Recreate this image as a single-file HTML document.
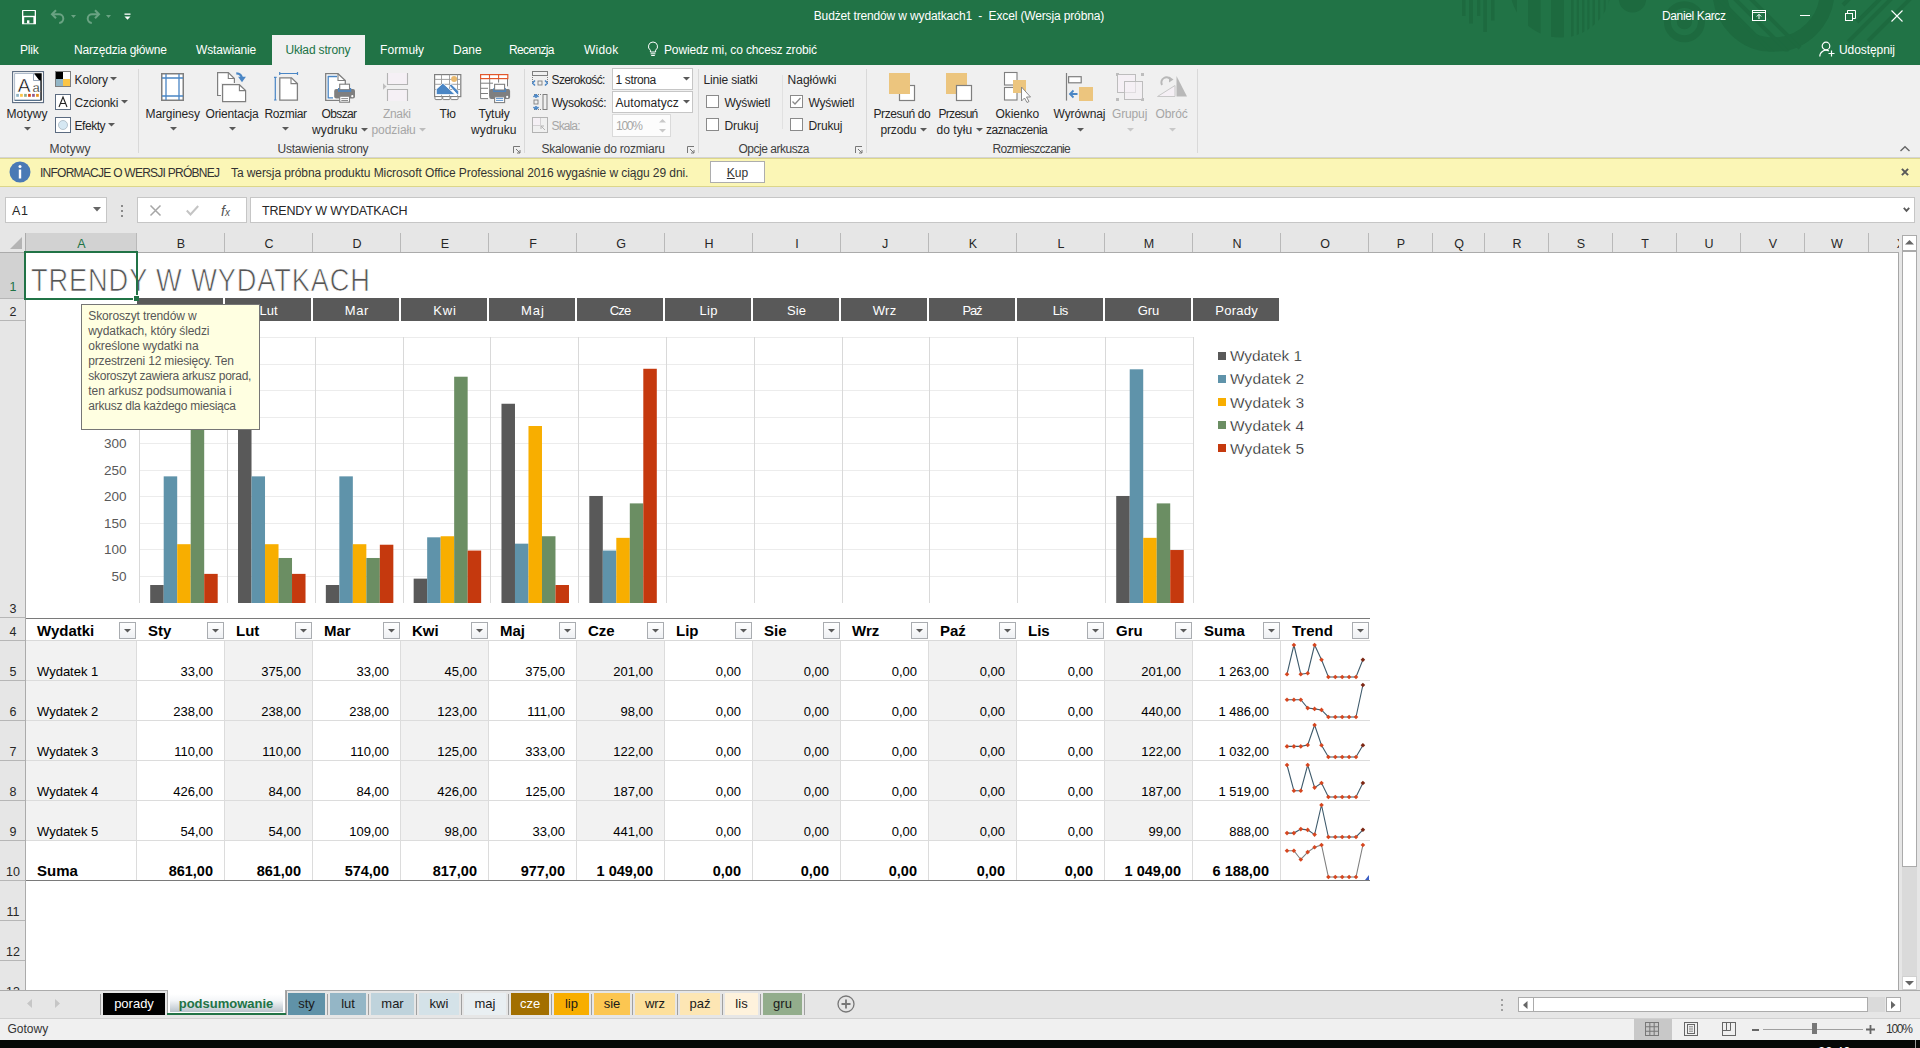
<!DOCTYPE html>
<html><head><meta charset="utf-8"><style>
html,body{margin:0;padding:0;width:1920px;height:1048px;overflow:hidden;background:#fff;font-family:"Liberation Sans", sans-serif;}
body>div,body>svg{position:absolute;}
svg{overflow:visible}

</style></head><body>
<div style="left:0px;top:0px;width:1920px;height:65px;background:#217346"></div>
<svg style="left:0px;top:0px;" width="1920" height="65" viewBox="0 0 1920 65"><defs><clipPath id="tb"><rect x="0" y="0" width="1920" height="65"/></clipPath>
<clipPath id="semi"><circle cx="1560.6" cy="-13" r="50.6"/></clipPath>
<clipPath id="bigc"><rect x="1700" y="-10" width="150" height="61.6"/></clipPath></defs>
<g clip-path="url(#tb)" fill="#1d6a3f">
<rect x="1462" y="0" width="3.5" height="16"/><rect x="1469" y="0" width="4" height="23.5"/>
<rect x="1477" y="0" width="3.3" height="16"/><rect x="1483.3" y="0" width="3.7" height="32"/>
<rect x="1491" y="0" width="3.5" height="20.5"/>
<g clip-path="url(#semi)"><rect x="1508" y="0" width="9" height="60"/><rect x="1528" y="0" width="12.6" height="60"/>
<rect x="1551" y="0" width="13" height="60"/><rect x="1571" y="0" width="2.6" height="60"/><rect x="1576.7" y="0" width="2.2" height="60"/>
<rect x="1582" y="0" width="2.4" height="60"/><rect x="1587.3" y="0" width="2.2" height="60"/><rect x="1592.5" y="0" width="2.4" height="60"/>
<rect x="1598" y="0" width="2.2" height="60"/><rect x="1603.7" y="0" width="2" height="60"/><rect x="1608.7" y="0" width="2" height="60"/></g>
<circle cx="1632.5" cy="-1" r="13.6"/>
<circle cx="1684.4" cy="21.7" r="17.05" fill="none" stroke="#1d6a3f" stroke-width="6.9"/>
<circle cx="1684.4" cy="21.7" r="7.6"/>
<g clip-path="url(#bigc)"><circle cx="1773.5" cy="-9" r="53.7" fill="none" stroke="#1d6a3f" stroke-width="14.6"/>
<g stroke="#1d6a3f" stroke-width="4"><line x1="1715" y1="-5" x2="1775" y2="55"/><line x1="1728" y1="-8" x2="1788" y2="52"/><line x1="1742" y1="-10" x2="1800" y2="48"/></g></g>
<g stroke="#1d6a3f" stroke-width="4"><line x1="1843" y1="5" x2="1853" y2="-5"/><line x1="1857" y1="22" x2="1884" y2="-5"/><line x1="1848" y1="42" x2="1895" y2="-5"/><line x1="1868" y1="41" x2="1914" y2="-5"/></g>
</g></svg>
<svg style="left:21px;top:9px;" width="16" height="16" viewBox="0 0 16 16"><rect x="1" y="1" width="14" height="14.3" rx="0.6" fill="#fff"/><rect x="2.3" y="2.0" width="11.4" height="4.8" fill="#217346"/><rect x="3.2" y="8.2" width="9.2" height="6.1" fill="#217346"/><rect x="6.0" y="11.3" width="2.4" height="3" fill="#fff"/></svg>
<svg style="left:50px;top:9px;" width="16" height="15" viewBox="0 0 16 15"><path d="M6 1.2L2 5.2L6 9.2" fill="none" stroke="#6aa383" stroke-width="2"/><path d="M2.6 5.2H8.6a4.4 4.4 0 0 1 0.6 8.8" fill="none" stroke="#6aa383" stroke-width="2"/></svg>
<svg style="left:71px;top:15px;" width="6" height="4" viewBox="0 0 6 4"><path d="M0 0h5l-2.5 3z" fill="#6aa383"/></svg>
<svg style="left:85px;top:9px;" width="16" height="15" viewBox="0 0 16 15"><path d="M10 1.2L14 5.2L10 9.2" fill="none" stroke="#6aa383" stroke-width="2"/><path d="M13.4 5.2H7.4a4.4 4.4 0 0 0 -0.6 8.8" fill="none" stroke="#6aa383" stroke-width="2"/></svg>
<svg style="left:106px;top:15px;" width="6" height="4" viewBox="0 0 6 4"><path d="M0 0h5l-2.5 3z" fill="#6aa383"/></svg>
<svg style="left:124px;top:13px;" width="8" height="8" viewBox="0 0 8 8"><rect x="0.5" y="0.5" width="6" height="1.3" fill="#fff"/><path d="M0.5 3.5h6l-3 3.2z" fill="#fff"/></svg>
<div style="left:558.93px;width:800px;text-align:center;top:6.84px;font-size:12px;line-height:19px;color:#fff;font-weight:normal;white-space:pre;letter-spacing:-0.143px;">Budżet trendów w wydatkach1  -  Excel (Wersja próbna)</div>
<div style="left:1662px;top:6.84px;font-size:12px;line-height:19px;color:#fff;font-weight:normal;white-space:pre;letter-spacing:-0.366px;">Daniel Karcz</div>
<svg style="left:1752px;top:10px;" width="14" height="12" viewBox="0 0 14 12"><rect x="0.5" y="0.5" width="13" height="10" fill="none" stroke="#fff"/><line x1="0.5" y1="2.5" x2="13.5" y2="2.5" stroke="#fff"/><path d="M7 9V4.5M4.8 6.5L7 4.3L9.2 6.5" fill="none" stroke="#fff"/></svg>
<div style="left:1800px;top:15px;width:10px;height:1px;background:#fff"></div>
<svg style="left:1845px;top:10px;" width="12" height="12" viewBox="0 0 12 12"><rect x="0.5" y="3.5" width="7" height="7" fill="none" stroke="#fff"/><path d="M2.5 3.5V0.5H10.5V8.5H7.5" fill="none" stroke="#fff"/></svg>
<svg style="left:1891px;top:10px;" width="12" height="12" viewBox="0 0 12 12"><path d="M0.5 0.5L11.5 11.5M11.5 0.5L0.5 11.5" stroke="#fff" stroke-width="1.1"/></svg>
<div style="left:272px;top:35px;width:93px;height:30px;background:#f0f0f0"></div>
<div style="left:20px;top:40.84px;font-size:12px;line-height:19px;color:#fff;font-weight:normal;white-space:pre;letter-spacing:-0.196px;">Plik</div>
<div style="left:74px;top:40.84px;font-size:12px;line-height:19px;color:#fff;font-weight:normal;white-space:pre;letter-spacing:-0.159px;">Narzędzia główne</div>
<div style="left:196px;top:40.84px;font-size:12px;line-height:19px;color:#fff;font-weight:normal;white-space:pre;letter-spacing:-0.123px;">Wstawianie</div>
<div style="left:380px;top:40.84px;font-size:12px;line-height:19px;color:#fff;font-weight:normal;white-space:pre;letter-spacing:0.110px;">Formuły</div>
<div style="left:453px;top:40.84px;font-size:12px;line-height:19px;color:#fff;font-weight:normal;white-space:pre;">Dane</div>
<div style="left:509px;top:40.84px;font-size:12px;line-height:19px;color:#fff;font-weight:normal;white-space:pre;letter-spacing:-0.647px;">Recenzja</div>
<div style="left:584px;top:40.84px;font-size:12px;line-height:19px;color:#fff;font-weight:normal;white-space:pre;letter-spacing:0.227px;">Widok</div>
<div style="left:285.5px;top:40.84px;font-size:12px;line-height:19px;color:#217346;font-weight:normal;white-space:pre;letter-spacing:-0.154px;">Układ strony</div>
<svg style="left:647px;top:41px;" width="12" height="16" viewBox="0 0 12 16"><path d="M6 1a4.5 4.5 0 0 0-2.6 8.2V11h5.2V9.2A4.5 4.5 0 0 0 6 1z" fill="none" stroke="#fff" stroke-width="1"/><line x1="3.6" y1="12.8" x2="8.4" y2="12.8" stroke="#fff"/><line x1="4.2" y1="14.5" x2="7.8" y2="14.5" stroke="#fff"/></svg>
<div style="left:664px;top:40.84px;font-size:12px;line-height:19px;color:#fff;font-weight:normal;white-space:pre;letter-spacing:-0.138px;">Powiedz mi, co chcesz zrobić</div>
<svg style="left:1819px;top:41px;" width="16" height="16" viewBox="0 0 16 16"><circle cx="7" cy="5" r="3.8" fill="none" stroke="#fff" stroke-width="1.2"/><path d="M0.8 15.5a6.2 6.2 0 0 1 9-5.6" fill="none" stroke="#fff" stroke-width="1.2"/><path d="M12.5 9.5v6M9.5 12.5h6" stroke="#fff" stroke-width="1.2"/></svg>
<div style="left:1839px;top:40.84px;font-size:12px;line-height:19px;color:#fff;font-weight:normal;white-space:pre;letter-spacing:-0.078px;">Udostępnij</div>
<div style="left:0px;top:65px;width:1920px;height:92px;background:#f0f0f0"></div>
<div style="left:0px;top:157px;width:1920px;height:1px;background:#d4d4d4"></div>
<div style="left:138px;top:69px;width:1px;height:84px;background:#d9d9d9"></div>
<div style="left:524px;top:69px;width:1px;height:84px;background:#d9d9d9"></div>
<div style="left:698px;top:69px;width:1px;height:84px;background:#d9d9d9"></div>
<div style="left:866px;top:69px;width:1px;height:84px;background:#d9d9d9"></div>
<div style="left:1197px;top:69px;width:1px;height:84px;background:#d9d9d9"></div>
<div style="left:782px;top:75px;width:1px;height:54px;background:#e1e1e1"></div>
<svg style="left:12px;top:71px;" width="32" height="32" viewBox="0 0 32 32"><rect x="0.6" y="0.6" width="30.9" height="31" fill="#fff" stroke="#5b6b80" stroke-width="1.1"/>
<path d="M2.6 2.5H21.6L28.6 9.4V29.3H2.6z" fill="#fff" stroke="#9aa9bd" stroke-width="0.8"/><path d="M2.6 29.3H28.6" stroke="#2f4e6e" stroke-width="0.9"/>
<path d="M22.1 2.2H29.7V29.6H28.5V9.6H27.3z" fill="#000"/><path d="M21.5 2.5V9.5H28" fill="none" stroke="#8a9bb0" stroke-width="0.9"/>
<text x="5.8" y="20.8" font-family="Liberation Sans" font-size="19" fill="#000" stroke="#fff" stroke-width="0.5">A</text><text x="20.5" y="20.9" font-family="Liberation Sans" font-size="13" fill="#000" stroke="#fff" stroke-width="0.3">a</text>
<rect x="4.2" y="22.9" width="2.7" height="2.9" fill="#8fb4c5"/><rect x="8.1" y="22.9" width="2.7" height="2.9" fill="#fbc546"/><rect x="12.1" y="22.9" width="2.7" height="2.9" fill="#8faa88"/>
<rect x="16.1" y="22.9" width="2.7" height="2.9" fill="#e2420f"/><rect x="20.1" y="22.9" width="2.7" height="2.9" fill="#8e5a8f"/><rect x="24.1" y="22.9" width="2.7" height="2.9" fill="#e6911c"/></svg>
<div style="left:6.5px;top:104.84px;font-size:12px;line-height:19px;color:#262626;font-weight:normal;white-space:pre;letter-spacing:0.066px;">Motywy</div>
<svg style="left:24px;top:127px;" width="7" height="4" viewBox="0 0 7 4"><path d="M0 0h7l-3.5 3.5z" fill="#595959"/></svg>
<svg style="left:55px;top:71px;" width="16" height="16" viewBox="0 0 16 16"><rect x="0.5" y="0.5" width="15" height="15" fill="#fff" stroke="#7f7f7f"/><rect x="1" y="1" width="7" height="7" fill="#000"/><rect x="1" y="8" width="7" height="7" fill="#93b6c6"/><rect x="8" y="8" width="7" height="7" fill="#fbc546"/></svg>
<div style="left:74.5px;top:70.84px;font-size:12px;line-height:19px;color:#262626;font-weight:normal;white-space:pre;letter-spacing:-0.123px;">Kolory</div>
<svg style="left:110px;top:77px;" width="7" height="4" viewBox="0 0 7 4"><path d="M0 0h7l-3.5 3.5z" fill="#595959"/></svg>
<svg style="left:55px;top:94px;" width="16" height="16" viewBox="0 0 16 16"><rect x="0.5" y="0.5" width="15" height="15" fill="#fff" stroke="#5b6b80"/><path d="M4 13L8 3L12 13M5.5 9.5h5" fill="none" stroke="#222" stroke-width="1.1"/></svg>
<div style="left:74.5px;top:93.84px;font-size:12px;line-height:19px;color:#262626;font-weight:normal;white-space:pre;letter-spacing:-0.221px;">Czcionki</div>
<svg style="left:121px;top:100px;" width="7" height="4" viewBox="0 0 7 4"><path d="M0 0h7l-3.5 3.5z" fill="#595959"/></svg>
<svg style="left:55px;top:117px;" width="16" height="16" viewBox="0 0 16 16"><rect x="0.5" y="0.5" width="15" height="15" fill="#fff" stroke="#5b6b80"/><circle cx="8" cy="8" r="4.5" fill="#d6e8f3" stroke="#aab8c2" stroke-width="0.8"/></svg>
<div style="left:74.5px;top:116.84px;font-size:12px;line-height:19px;color:#262626;font-weight:normal;white-space:pre;letter-spacing:-0.449px;">Efekty</div>
<svg style="left:108px;top:123px;" width="7" height="4" viewBox="0 0 7 4"><path d="M0 0h7l-3.5 3.5z" fill="#595959"/></svg>
<div style="left:49.5px;top:139.84px;font-size:12px;line-height:19px;color:#404040;font-weight:normal;white-space:pre;letter-spacing:0.066px;">Motywy</div>
<svg style="left:161px;top:73px;" width="23" height="28" viewBox="0 0 23 28"><rect x="0.75" y="0.75" width="21.5" height="26.5" fill="#fff" stroke="#7f7f7f" stroke-width="1.5"/><path d="M5 1V27M18 1V27M1 5H22M1 23H22" stroke="#4a86c5" stroke-width="1.3"/></svg>
<div style="left:145.5px;top:104.84px;font-size:12px;line-height:19px;color:#262626;font-weight:normal;white-space:pre;letter-spacing:-0.107px;">Marginesy</div>
<svg style="left:170px;top:127px;" width="7" height="4" viewBox="0 0 7 4"><path d="M0 0h7l-3.5 3.5z" fill="#595959"/></svg>
<svg style="left:217px;top:72px;" width="31" height="31" viewBox="0 0 31 31"><path d="M0.6 0.6H11.3L17.4 6.5V23.5H0.6z" fill="#fff" stroke="#7f7f7f" stroke-width="1.2"/><path d="M11.3 0.6V6.5H17.4" fill="none" stroke="#7f7f7f" stroke-width="1.1"/><path d="M5.6 12.7H22.4L28.6 18.6V29.6H5.6z" fill="#fff" stroke="#f0f0f0" stroke-width="3.2"/><path d="M5.6 12.7H22.4L28.6 18.6V29.6H5.6z" fill="#fff" stroke="#7f7f7f" stroke-width="1.2"/><path d="M22.4 12.7V18.6H28.6" fill="none" stroke="#7f7f7f" stroke-width="1.1"/><path d="M19.3 1.3C22.6 1.3 25 3.6 25 7.2" fill="none" stroke="#4a86c5" stroke-width="2.3"/><path d="M21.1 4.8H28.9L25 10.3z" fill="#4a86c5"/></svg>
<div style="left:205.5px;top:104.84px;font-size:12px;line-height:19px;color:#262626;font-weight:normal;white-space:pre;letter-spacing:-0.155px;">Orientacja</div>
<svg style="left:229px;top:127px;" width="7" height="4" viewBox="0 0 7 4"><path d="M0 0h7l-3.5 3.5z" fill="#595959"/></svg>
<svg style="left:274px;top:72px;" width="25" height="29" viewBox="0 0 25 29"><path d="M5.7 1.5H23.5M5.7 0v3M23.5 0v3" stroke="#4a86c5" stroke-width="1.2"/><path d="M1.3 5.4V28M0 5.4H2.6M0 28H2.6" stroke="#4a86c5" stroke-width="1.2"/><path d="M5.8 5.9H17.5L23.4 11.6V28.1H5.8z" fill="#fff" stroke="#7f7f7f" stroke-width="1.3"/><path d="M17 5.9V11.6H23.4" fill="none" stroke="#7f7f7f" stroke-width="1.1"/></svg>
<div style="left:264.5px;top:104.84px;font-size:12px;line-height:19px;color:#262626;font-weight:normal;white-space:pre;letter-spacing:-0.362px;">Rozmiar</div>
<svg style="left:282px;top:127px;" width="7" height="4" viewBox="0 0 7 4"><path d="M0 0h7l-3.5 3.5z" fill="#595959"/></svg>
<svg style="left:325px;top:73px;" width="31" height="31" viewBox="0 0 31 31"><path d="M0.7 0.7H13L20.3 7.5V27.3H0.7z" fill="#fff" stroke="#7f7f7f" stroke-width="1.3"/><path d="M13 0.7V7.5H20.3" fill="none" stroke="#7f7f7f" stroke-width="1.1"/><path d="M12 3.5H3.2V24.8H8" fill="none" stroke="#4a86c5" stroke-width="1.3"/><rect x="9.2" y="16" width="20.8" height="9.4" rx="2" fill="#7f7f7f"/><rect x="13" y="15" width="13.2" height="3.8" fill="#4a86c5"/><rect x="14.7" y="11.2" width="9.8" height="5.5" fill="#fff" stroke="#7f7f7f" stroke-width="1.1"/><circle cx="27.3" cy="23.2" r="1.1" fill="#fff"/><rect x="14.7" y="23.2" width="9.8" height="6" fill="#fff" stroke="#7f7f7f" stroke-width="1.1"/><path d="M16.3 25.6H23M16.3 27.5H23" stroke="#7f7f7f" stroke-width="0.9"/></svg>
<div style="left:321.5px;top:104.84px;font-size:12px;line-height:19px;color:#262626;font-weight:normal;white-space:pre;letter-spacing:-0.616px;">Obszar</div>
<div style="left:312px;top:120.84px;font-size:12px;line-height:19px;color:#262626;font-weight:normal;white-space:pre;letter-spacing:0.136px;">wydruku</div>
<svg style="left:361px;top:127.5px;" width="7" height="4" viewBox="0 0 7 4"><path d="M0 0h7l-3.5 3.5z" fill="#595959"/></svg>
<svg style="left:383px;top:73px;" width="26" height="28" viewBox="0 0 26 28"><path d="M4.5 0V11.5H24.5V0" fill="#f5f0f5" stroke="#b3b3b3" stroke-width="1.1"/><path d="M4.5 28V16.5H24.5V28" fill="#f5f0f5" stroke="#b3b3b3" stroke-width="1.1"/><path d="M0 10.2L3.5 13.5L0 16.8z" fill="#bdbdbd"/></svg>
<div style="left:383px;top:104.84px;font-size:12px;line-height:19px;color:#a6a6a6;font-weight:normal;white-space:pre;letter-spacing:-0.336px;">Znaki</div>
<div style="left:371.5px;top:120.84px;font-size:12px;line-height:19px;color:#a6a6a6;font-weight:normal;white-space:pre;letter-spacing:-0.058px;">podziału</div>
<svg style="left:418.5px;top:127.5px;" width="7" height="4" viewBox="0 0 7 4"><path d="M0 0h7l-3.5 3.5z" fill="#bdbdbd"/></svg>
<svg style="left:434px;top:74px;" width="28" height="27" viewBox="0 0 28 27"><rect x="0.6" y="0.6" width="26.2" height="22" fill="#fff" stroke="#7f7f7f" stroke-width="1.2"/><path d="M7.5 0.6V22.6M15.5 0.6V22.6M23.5 0.6V22.6M0.6 5.4H26.8M0.6 10.3H26.8M0.6 15.5H26.8" stroke="#999" stroke-width="0.9"/><path d="M2.3 20.6V15.2L8.9 9.2L21.2 20.6z" fill="#4a86c5" stroke="#fff" stroke-width="0.8"/><path d="M15.2 11.5L17.2 10L24.7 17.2V20.6H23.2z" fill="#4a86c5" stroke="#fff" stroke-width="0.8"/><circle cx="20.1" cy="4.9" r="3" fill="#e9b96e"/><path d="M1 23.2v1.6a0.8 0.8 0 0 0 0.8 0.8H7.2a0.8 0.8 0 0 0 0.8-0.8v-1.6M8.8 23.2v1.6a0.8 0.8 0 0 0 0.8 0.8h5.6a0.8 0.8 0 0 0 0.8-0.8v-1.6M16.8 23.2v1.6a0.8 0.8 0 0 0 0.8 0.8h5.6a0.8 0.8 0 0 0 0.8-0.8v-1.6" fill="#fff" stroke="#7f7f7f" stroke-width="1"/></svg>
<div style="left:439.5px;top:104.84px;font-size:12px;line-height:19px;color:#262626;font-weight:normal;white-space:pre;letter-spacing:-0.135px;">Tło</div>
<svg style="left:480px;top:74px;" width="31" height="30" viewBox="0 0 31 30"><rect x="0.6" y="4.6" width="26.9" height="20" fill="#fff"/><path d="M0.6 4.6V24.6H8M0.6 9.2H13M0.6 14.3H8M0.6 19.5H8M9.7 4.6V21.8M18.6 4.6V8.6M27.5 4.6V12.3" fill="none" stroke="#7f7f7f" stroke-width="1"/><rect x="0.6" y="0.6" width="27.2" height="4" fill="#fff" stroke="#e2572b" stroke-width="1.2"/><path d="M9.5 0.6V4.6M18.6 0.6V4.6" stroke="#e2572b" stroke-width="1.1"/><rect x="9.2" y="14.9" width="20.9" height="10" rx="2" fill="#7f7f7f"/><rect x="13.2" y="14.2" width="12.9" height="3.7" fill="#4a86c5"/><rect x="14.6" y="10.3" width="10" height="5.7" fill="#fff" stroke="#7f7f7f" stroke-width="1.1"/><circle cx="27.2" cy="22.9" r="1.1" fill="#fff"/><rect x="14.6" y="22.8" width="10" height="5.8" fill="#fff" stroke="#7f7f7f" stroke-width="1.1"/><path d="M16 24.4H23.2M16 26.4H23.2" stroke="#4a86c5" stroke-width="0.9"/></svg>
<div style="left:478.5px;top:104.84px;font-size:12px;line-height:19px;color:#262626;font-weight:normal;white-space:pre;letter-spacing:-0.029px;">Tytuły</div>
<div style="left:471px;top:120.84px;font-size:12px;line-height:19px;color:#262626;font-weight:normal;white-space:pre;letter-spacing:0.136px;">wydruku</div>
<svg style="left:513px;top:146px;" width="8" height="8" viewBox="0 0 8 8"><path d="M0.5 7V0.5H7" fill="none" stroke="#777"/><path d="M3 3L7 7M7 4v3H4" fill="none" stroke="#777"/></svg>
<div style="left:277.5px;top:139.84px;font-size:12px;line-height:19px;color:#404040;font-weight:normal;white-space:pre;letter-spacing:-0.225px;">Ustawienia strony</div>
<svg style="left:532px;top:71px;" width="17" height="17" viewBox="0 0 17 17"><rect x="0.5" y="0.5" width="15" height="4" fill="none" stroke="#7f7f7f"/><path d="M0.5 6v8M15.5 6v8" stroke="#7f7f7f" stroke-dasharray="1 1"/><rect x="6" y="10" width="4" height="4" fill="none" stroke="#7f7f7f" stroke-width="0.9"/><path d="M0.5 12L3 9.5M0.5 12L3 14.5M15.5 12L13 9.5M15.5 12L13 14.5" stroke="#4a86c5" stroke-width="1.6"/></svg>
<div style="left:551.5px;top:70.84px;font-size:12px;line-height:19px;color:#262626;font-weight:normal;white-space:pre;letter-spacing:-0.606px;">Szerokość:</div>
<div style="left:612px;top:68px;width:81px;height:22px;background:#fff;border:1px solid #c6c6c6;box-sizing:border-box"></div>
<div style="left:615.5px;top:70.84px;font-size:12px;line-height:19px;color:#262626;font-weight:normal;white-space:pre;letter-spacing:-0.366px;">1 strona</div>
<svg style="left:683px;top:77px;" width="7" height="4" viewBox="0 0 7 4"><path d="M0 0h7l-3.5 3.5z" fill="#595959"/></svg>
<svg style="left:532px;top:94px;" width="17" height="17" viewBox="0 0 17 17"><rect x="11" y="0.5" width="4" height="15" fill="none" stroke="#7f7f7f"/><path d="M2 0.5h8M2 15.5h8" stroke="#7f7f7f" stroke-dasharray="1 1"/><rect x="2" y="6" width="4" height="4" fill="none" stroke="#7f7f7f" stroke-width="0.9"/><path d="M4 0.5L1.5 3M4 0.5L6.5 3M4 15.5L1.5 13M4 15.5L6.5 13M4 1v3M4 12v3" stroke="#4a86c5" stroke-width="1.6"/></svg>
<div style="left:551.5px;top:93.84px;font-size:12px;line-height:19px;color:#262626;font-weight:normal;white-space:pre;letter-spacing:-0.363px;">Wysokość:</div>
<div style="left:612px;top:91px;width:81px;height:22px;background:#fff;border:1px solid #c6c6c6;box-sizing:border-box"></div>
<div style="left:615.5px;top:93.84px;font-size:12px;line-height:19px;color:#262626;font-weight:normal;white-space:pre;letter-spacing:0.068px;">Automatycz</div>
<svg style="left:683px;top:100px;" width="7" height="4" viewBox="0 0 7 4"><path d="M0 0h7l-3.5 3.5z" fill="#595959"/></svg>
<svg style="left:532px;top:117px;" width="16" height="16" viewBox="0 0 16 16"><rect x="0.5" y="0.5" width="8" height="8" fill="#f5f0f5" stroke="#b3b3b3" stroke-dasharray="1 1"/><rect x="0.5" y="0.5" width="15" height="15" fill="none" stroke="#b3b3b3"/><path d="M9 9L13 13M9 9v3M9 9h3" stroke="#b3b3b3"/></svg>
<div style="left:551.5px;top:116.84px;font-size:12px;line-height:19px;color:#a6a6a6;font-weight:normal;white-space:pre;letter-spacing:-0.870px;">Skala:</div>
<div style="left:612px;top:114px;width:59px;height:23px;background:#fcfcfc;border:1px solid #dadada;box-sizing:border-box"></div>
<div style="left:616px;top:116.84px;font-size:12px;line-height:19px;color:#a6a6a6;font-weight:normal;white-space:pre;letter-spacing:-1.297px;">100%</div>
<svg style="left:659px;top:119px;" width="7" height="14" viewBox="0 0 7 14"><path d="M0 3.5h7L3.5 0z" fill="#c8c8c8"/><path d="M0 10h7L3.5 13.5z" fill="#c8c8c8"/></svg>
<div style="left:541.5px;top:139.84px;font-size:12px;line-height:19px;color:#404040;font-weight:normal;white-space:pre;letter-spacing:-0.222px;">Skalowanie do rozmiaru</div>
<svg style="left:687px;top:146px;" width="8" height="8" viewBox="0 0 8 8"><path d="M0.5 7V0.5H7" fill="none" stroke="#777"/><path d="M3 3L7 7M7 4v3H4" fill="none" stroke="#777"/></svg>
<div style="left:703.5px;top:70.84px;font-size:12px;line-height:19px;color:#262626;font-weight:normal;white-space:pre;letter-spacing:-0.166px;">Linie siatki</div>
<svg style="left:706px;top:95px;" width="13" height="13" viewBox="0 0 13 13"><rect x="0.5" y="0.5" width="12" height="12" fill="#fff" stroke="#8a8a8a"/></svg>
<div style="left:724.5px;top:93.84px;font-size:12px;line-height:19px;color:#262626;font-weight:normal;white-space:pre;letter-spacing:-0.190px;">Wyświetl</div>
<svg style="left:706px;top:118px;" width="13" height="13" viewBox="0 0 13 13"><rect x="0.5" y="0.5" width="12" height="12" fill="#fff" stroke="#8a8a8a"/></svg>
<div style="left:724.5px;top:116.84px;font-size:12px;line-height:19px;color:#262626;font-weight:normal;white-space:pre;letter-spacing:-0.135px;">Drukuj</div>
<div style="left:787.5px;top:70.84px;font-size:12px;line-height:19px;color:#262626;font-weight:normal;white-space:pre;letter-spacing:0.030px;">Nagłówki</div>
<svg style="left:790px;top:95px;" width="13" height="13" viewBox="0 0 13 13"><rect x="0.5" y="0.5" width="12" height="12" fill="#fff" stroke="#8a8a8a"/><path d="M2.5 6.5L5 9L10.5 3" fill="none" stroke="#8a8a8a" stroke-width="1.3"/></svg>
<div style="left:808.5px;top:93.84px;font-size:12px;line-height:19px;color:#262626;font-weight:normal;white-space:pre;letter-spacing:-0.190px;">Wyświetl</div>
<svg style="left:790px;top:118px;" width="13" height="13" viewBox="0 0 13 13"><rect x="0.5" y="0.5" width="12" height="12" fill="#fff" stroke="#8a8a8a"/></svg>
<div style="left:808.5px;top:116.84px;font-size:12px;line-height:19px;color:#262626;font-weight:normal;white-space:pre;letter-spacing:-0.135px;">Drukuj</div>
<div style="left:738.5px;top:139.84px;font-size:12px;line-height:19px;color:#404040;font-weight:normal;white-space:pre;letter-spacing:-0.483px;">Opcje arkusza</div>
<svg style="left:855px;top:146px;" width="8" height="8" viewBox="0 0 8 8"><path d="M0.5 7V0.5H7" fill="none" stroke="#777"/><path d="M3 3L7 7M7 4v3H4" fill="none" stroke="#777"/></svg>
<svg style="left:889px;top:73px;" width="28" height="28" viewBox="0 0 28 28"><rect x="10.5" y="12.5" width="15" height="15" fill="#fff" stroke="#7f7f7f" stroke-width="1.2"/><rect x="0" y="0" width="21" height="21" fill="#ecc57e"/></svg>
<div style="left:873.5px;top:104.84px;font-size:12px;line-height:19px;color:#262626;font-weight:normal;white-space:pre;letter-spacing:-0.389px;">Przesuń do</div>
<div style="left:880.5px;top:120.84px;font-size:12px;line-height:19px;color:#262626;font-weight:normal;white-space:pre;letter-spacing:-0.159px;">przodu</div>
<svg style="left:920px;top:127.5px;" width="7" height="4" viewBox="0 0 7 4"><path d="M0 0h7l-3.5 3.5z" fill="#595959"/></svg>
<svg style="left:946px;top:73px;" width="28" height="28" viewBox="0 0 28 28"><rect x="0" y="0" width="21" height="21" fill="#ecc57e"/><rect x="10.5" y="12.5" width="15" height="15" fill="#fff" stroke="#7f7f7f" stroke-width="1.2"/></svg>
<div style="left:938.5px;top:104.84px;font-size:12px;line-height:19px;color:#262626;font-weight:normal;white-space:pre;letter-spacing:-0.704px;">Przesuń</div>
<div style="left:936.5px;top:120.84px;font-size:12px;line-height:19px;color:#262626;font-weight:normal;white-space:pre;letter-spacing:0.041px;">do tyłu</div>
<svg style="left:975.5px;top:127.5px;" width="7" height="4" viewBox="0 0 7 4"><path d="M0 0h7l-3.5 3.5z" fill="#595959"/></svg>
<svg style="left:1004px;top:72px;" width="26" height="30" viewBox="0 0 26 30"><rect x="0.5" y="0.5" width="12.5" height="12.5" fill="#fff" stroke="#7f7f7f" stroke-width="1.1"/><rect x="0.5" y="15.5" width="12.5" height="12.5" fill="#fff" stroke="#7f7f7f" stroke-width="1.1"/><rect x="9" y="8" width="13" height="13" fill="#ecc57e"/><path d="M17.5 15v14l3-3l2.5 4.5l2-1l-2.5-4.5h4z" fill="#fff" stroke="#7f7f7f" stroke-width="0.9"/></svg>
<div style="left:995.5px;top:104.84px;font-size:12px;line-height:19px;color:#262626;font-weight:normal;white-space:pre;letter-spacing:-0.070px;">Okienko</div>
<div style="left:986px;top:120.84px;font-size:12px;line-height:19px;color:#262626;font-weight:normal;white-space:pre;letter-spacing:-0.496px;">zaznaczenia</div>
<svg style="left:1065px;top:72px;" width="30" height="30" viewBox="0 0 30 30"><path d="M1.5 1V28.6" stroke="#7f7f7f" stroke-width="1.2"/><rect x="3.6" y="4.7" width="12.6" height="6.1" fill="#fff" stroke="#7f7f7f" stroke-width="1.2"/><rect x="14" y="15" width="14" height="14" fill="#ecc57e"/><path d="M12.5 22H5M8.5 18.5L5 22L8.5 25.5" fill="none" stroke="#4a86c5" stroke-width="1.8"/></svg>
<div style="left:1053.5px;top:104.84px;font-size:12px;line-height:19px;color:#262626;font-weight:normal;white-space:pre;letter-spacing:-0.082px;">Wyrównaj</div>
<svg style="left:1077px;top:127.5px;" width="7" height="4" viewBox="0 0 7 4"><path d="M0 0h7l-3.5 3.5z" fill="#595959"/></svg>
<svg style="left:1116px;top:73px;" width="28" height="28" viewBox="0 0 28 28"><rect x="0" y="0" width="3" height="3" fill="#bdbdbd"/><rect x="25" y="0" width="3" height="3" fill="#bdbdbd"/><rect x="0" y="25" width="3" height="3" fill="#bdbdbd"/><rect x="25" y="25" width="3" height="3" fill="#bdbdbd"/><rect x="1.5" y="1.5" width="18" height="18" fill="#f5f0f5" stroke="#bdbdbd" stroke-width="1"/><rect x="8.5" y="8.5" width="18" height="18" fill="#f5f0f5" fill-opacity="0.6" stroke="#bdbdbd" stroke-width="1"/></svg>
<div style="left:1112px;top:104.84px;font-size:12px;line-height:19px;color:#a6a6a6;font-weight:normal;white-space:pre;letter-spacing:-0.144px;">Grupuj</div>
<svg style="left:1127px;top:127.5px;" width="7" height="4" viewBox="0 0 7 4"><path d="M0 0h7l-3.5 3.5z" fill="#c8c8c8"/></svg>
<svg style="left:1157px;top:75px;" width="31" height="22" viewBox="0 0 31 22"><path d="M0.5 21.5L18 10.5V21.5z" fill="#f5f0f5" stroke="#c8c8c8"/><path d="M19.5 1L30 21.5H19.5z" fill="#b8b8b8"/><path d="M5 10a5 5 0 0 1 9-5" fill="none" stroke="#b8b8b8" stroke-width="2"/><path d="M12 1.5l4.5 3l-4.5 3z" fill="#b8b8b8"/></svg>
<div style="left:1155.5px;top:104.84px;font-size:12px;line-height:19px;color:#a6a6a6;font-weight:normal;white-space:pre;letter-spacing:-0.095px;">Obróć</div>
<svg style="left:1168.5px;top:127.5px;" width="7" height="4" viewBox="0 0 7 4"><path d="M0 0h7l-3.5 3.5z" fill="#c8c8c8"/></svg>
<div style="left:992.5px;top:139.84px;font-size:12px;line-height:19px;color:#404040;font-weight:normal;white-space:pre;letter-spacing:-0.701px;">Rozmieszczanie</div>
<svg style="left:1900px;top:146px;" width="10" height="6" viewBox="0 0 10 6"><path d="M0.5 5L5 0.8L9.5 5" fill="none" stroke="#666" stroke-width="1.4"/></svg>
<div style="left:0px;top:158px;width:1920px;height:29px;background:#fbf6b6"></div>
<div style="left:0px;top:158px;width:1920px;height:1px;background:#dcd68a"></div>
<div style="left:0px;top:186px;width:1920px;height:1px;background:#dcd68a"></div>
<svg style="left:9px;top:161px;" width="22" height="22" viewBox="0 0 22 22"><circle cx="11" cy="11" r="10.5" fill="#4a7ab5"/><circle cx="11" cy="5.6" r="1.5" fill="#fff"/><rect x="9.8" y="8.5" width="2.4" height="9" fill="#fff"/></svg>
<div style="left:40px;top:163.84px;font-size:12px;line-height:19px;color:#333;font-weight:normal;white-space:pre;letter-spacing:-0.744px;">INFORMACJE O WERSJI PRÓBNEJ</div>
<div style="left:231px;top:163.84px;font-size:12px;line-height:19px;color:#333;font-weight:normal;white-space:pre;letter-spacing:-0.079px;">Ta wersja próbna produktu Microsoft Office Professional 2016 wygaśnie w ciągu 29 dni.</div>
<div style="left:710px;top:161px;width:55px;height:22px;background:#fff;border:1px solid #adadad;box-sizing:border-box"></div>
<div style="left:337.50px;width:800px;text-align:center;top:163.84px;font-size:12px;line-height:19px;color:#333;font-weight:normal;white-space:pre;"><u>K</u>up</div>
<svg style="left:1901px;top:168px;" width="8" height="8" viewBox="0 0 8 8"><path d="M0.9 0.9L7.1 7.1M7.1 0.9L0.9 7.1" stroke="#595959" stroke-width="2"/></svg>
<div style="left:0px;top:187px;width:1920px;height:46px;background:#e6e6e6"></div>
<div style="left:5px;top:197px;width:102px;height:26px;background:#fff;border:1px solid #c6c6c6;box-sizing:border-box"></div>
<div style="left:12px;top:201.17px;font-size:12.5px;line-height:20px;color:#262626;font-weight:normal;white-space:pre;letter-spacing:0.710px;">A1</div>
<svg style="left:93px;top:207px;" width="8" height="5" viewBox="0 0 8 5"><path d="M0 0h8L4 4.5z" fill="#666"/></svg>
<div style="left:121px;top:205px;width:2px;height:2px;background:#8a8a8a"></div>
<div style="left:121px;top:210px;width:2px;height:2px;background:#8a8a8a"></div>
<div style="left:121px;top:215px;width:2px;height:2px;background:#8a8a8a"></div>
<div style="left:137px;top:197px;width:110px;height:26px;background:#fff;border:1px solid #c6c6c6;box-sizing:border-box"></div>
<svg style="left:150px;top:205px;" width="11" height="11" viewBox="0 0 11 11"><path d="M0.5 0.5L10.5 10.5M10.5 0.5L0.5 10.5" stroke="#a6a6a6" stroke-width="1.5"/></svg>
<svg style="left:186px;top:205px;" width="13" height="11" viewBox="0 0 13 11"><path d="M0.8 5.5L4.5 9.5L12.2 1" fill="none" stroke="#c4c4c4" stroke-width="2"/></svg>
<div style="left:221px;top:199.65px;font-size:14px;line-height:22px;color:#555;font-weight:normal;white-space:pre;font-family:"Liberation Serif";"><i>f</i><span style="font-size:10px"><i>x</i></span></div>
<div style="left:250px;top:197px;width:1665px;height:26px;background:#fff;border:1px solid #c6c6c6;box-sizing:border-box"></div>
<div style="left:262px;top:201.17px;font-size:12.5px;line-height:20px;color:#262626;font-weight:normal;white-space:pre;letter-spacing:-0.197px;">TRENDY W WYDATKACH</div>
<svg style="left:1903px;top:207px;" width="7" height="5" viewBox="0 0 7 5"><path d="M0.8 0.9L3.5 3.9L6.2 0.9" fill="none" stroke="#595959" stroke-width="1.8"/></svg>
<div style="left:0px;top:233px;width:1899px;height:20px;background:#e6e6e6"></div>
<div style="left:25px;top:233px;width:111px;height:19px;background:#d2d2d2"></div>
<div style="left:25px;top:233px;width:1px;height:19px;background:#ababab"></div>
<div style="left:136px;top:233px;width:1px;height:19px;background:#b9b9b9"></div>
<div style="left:224px;top:233px;width:1px;height:19px;background:#b9b9b9"></div>
<div style="left:312px;top:233px;width:1px;height:19px;background:#b9b9b9"></div>
<div style="left:400px;top:233px;width:1px;height:19px;background:#b9b9b9"></div>
<div style="left:488px;top:233px;width:1px;height:19px;background:#b9b9b9"></div>
<div style="left:576px;top:233px;width:1px;height:19px;background:#b9b9b9"></div>
<div style="left:664px;top:233px;width:1px;height:19px;background:#b9b9b9"></div>
<div style="left:752px;top:233px;width:1px;height:19px;background:#b9b9b9"></div>
<div style="left:840px;top:233px;width:1px;height:19px;background:#b9b9b9"></div>
<div style="left:928px;top:233px;width:1px;height:19px;background:#b9b9b9"></div>
<div style="left:1016px;top:233px;width:1px;height:19px;background:#b9b9b9"></div>
<div style="left:1104px;top:233px;width:1px;height:19px;background:#b9b9b9"></div>
<div style="left:1192px;top:233px;width:1px;height:19px;background:#b9b9b9"></div>
<div style="left:1280px;top:233px;width:1px;height:19px;background:#b9b9b9"></div>
<div style="left:1368px;top:233px;width:1px;height:19px;background:#b9b9b9"></div>
<div style="left:1432px;top:233px;width:1px;height:19px;background:#b9b9b9"></div>
<div style="left:1484px;top:233px;width:1px;height:19px;background:#b9b9b9"></div>
<div style="left:1548px;top:233px;width:1px;height:19px;background:#b9b9b9"></div>
<div style="left:1612px;top:233px;width:1px;height:19px;background:#b9b9b9"></div>
<div style="left:1676px;top:233px;width:1px;height:19px;background:#b9b9b9"></div>
<div style="left:1740px;top:233px;width:1px;height:19px;background:#b9b9b9"></div>
<div style="left:1804px;top:233px;width:1px;height:19px;background:#b9b9b9"></div>
<div style="left:1868px;top:233px;width:1px;height:19px;background:#b9b9b9"></div>
<div style="left:0px;top:252px;width:1899px;height:1px;background:#ababab"></div>
<div style="left:-318.50px;width:800px;text-align:center;top:234.17px;font-size:12.5px;line-height:20px;color:#217346;font-weight:normal;white-space:pre;">A</div>
<div style="left:-219.00px;width:800px;text-align:center;top:234.17px;font-size:12.5px;line-height:20px;color:#262626;font-weight:normal;white-space:pre;">B</div>
<div style="left:-131.00px;width:800px;text-align:center;top:234.17px;font-size:12.5px;line-height:20px;color:#262626;font-weight:normal;white-space:pre;">C</div>
<div style="left:-43.00px;width:800px;text-align:center;top:234.17px;font-size:12.5px;line-height:20px;color:#262626;font-weight:normal;white-space:pre;">D</div>
<div style="left:45.00px;width:800px;text-align:center;top:234.17px;font-size:12.5px;line-height:20px;color:#262626;font-weight:normal;white-space:pre;">E</div>
<div style="left:133.00px;width:800px;text-align:center;top:234.17px;font-size:12.5px;line-height:20px;color:#262626;font-weight:normal;white-space:pre;">F</div>
<div style="left:221.00px;width:800px;text-align:center;top:234.17px;font-size:12.5px;line-height:20px;color:#262626;font-weight:normal;white-space:pre;">G</div>
<div style="left:309.00px;width:800px;text-align:center;top:234.17px;font-size:12.5px;line-height:20px;color:#262626;font-weight:normal;white-space:pre;">H</div>
<div style="left:397.00px;width:800px;text-align:center;top:234.17px;font-size:12.5px;line-height:20px;color:#262626;font-weight:normal;white-space:pre;">I</div>
<div style="left:485.00px;width:800px;text-align:center;top:234.17px;font-size:12.5px;line-height:20px;color:#262626;font-weight:normal;white-space:pre;">J</div>
<div style="left:573.00px;width:800px;text-align:center;top:234.17px;font-size:12.5px;line-height:20px;color:#262626;font-weight:normal;white-space:pre;">K</div>
<div style="left:661.00px;width:800px;text-align:center;top:234.17px;font-size:12.5px;line-height:20px;color:#262626;font-weight:normal;white-space:pre;">L</div>
<div style="left:749.00px;width:800px;text-align:center;top:234.17px;font-size:12.5px;line-height:20px;color:#262626;font-weight:normal;white-space:pre;">M</div>
<div style="left:837.00px;width:800px;text-align:center;top:234.17px;font-size:12.5px;line-height:20px;color:#262626;font-weight:normal;white-space:pre;">N</div>
<div style="left:925.00px;width:800px;text-align:center;top:234.17px;font-size:12.5px;line-height:20px;color:#262626;font-weight:normal;white-space:pre;">O</div>
<div style="left:1001.00px;width:800px;text-align:center;top:234.17px;font-size:12.5px;line-height:20px;color:#262626;font-weight:normal;white-space:pre;">P</div>
<div style="left:1059.00px;width:800px;text-align:center;top:234.17px;font-size:12.5px;line-height:20px;color:#262626;font-weight:normal;white-space:pre;">Q</div>
<div style="left:1117.00px;width:800px;text-align:center;top:234.17px;font-size:12.5px;line-height:20px;color:#262626;font-weight:normal;white-space:pre;">R</div>
<div style="left:1181.00px;width:800px;text-align:center;top:234.17px;font-size:12.5px;line-height:20px;color:#262626;font-weight:normal;white-space:pre;">S</div>
<div style="left:1245.00px;width:800px;text-align:center;top:234.17px;font-size:12.5px;line-height:20px;color:#262626;font-weight:normal;white-space:pre;">T</div>
<div style="left:1309.00px;width:800px;text-align:center;top:234.17px;font-size:12.5px;line-height:20px;color:#262626;font-weight:normal;white-space:pre;">U</div>
<div style="left:1373.00px;width:800px;text-align:center;top:234.17px;font-size:12.5px;line-height:20px;color:#262626;font-weight:normal;white-space:pre;">V</div>
<div style="left:1437.00px;width:800px;text-align:center;top:234.17px;font-size:12.5px;line-height:20px;color:#262626;font-weight:normal;white-space:pre;">W</div>
<div style="left:1501.00px;width:800px;text-align:center;top:234.17px;font-size:12.5px;line-height:20px;color:#262626;font-weight:normal;white-space:pre;">X</div>
<svg style="left:10px;top:237px;" width="12" height="12" viewBox="0 0 12 12"><path d="M12 0V12H0z" fill="#b4b4b4"/></svg>
<div style="left:0px;top:253px;width:25px;height:737px;background:#e6e6e6"></div>
<div style="left:0px;top:253px;width:25px;height:45px;background:#d2d2d2"></div>
<div style="left:25px;top:253px;width:1px;height:737px;background:#ababab"></div>
<div style="left:0px;top:298px;width:25px;height:1px;background:#b6b6b6"></div>
<div style="left:-387.00px;width:800px;text-align:center;top:277.17px;font-size:12.5px;line-height:20px;color:#217346;font-weight:normal;white-space:pre;">1</div>
<div style="left:0px;top:320px;width:25px;height:1px;background:#b6b6b6"></div>
<div style="left:-387.00px;width:800px;text-align:center;top:302.17px;font-size:12.5px;line-height:20px;color:#262626;font-weight:normal;white-space:pre;">2</div>
<div style="left:0px;top:617px;width:25px;height:1px;background:#b6b6b6"></div>
<div style="left:-387.00px;width:800px;text-align:center;top:599.17px;font-size:12.5px;line-height:20px;color:#262626;font-weight:normal;white-space:pre;">3</div>
<div style="left:0px;top:640px;width:25px;height:1px;background:#b6b6b6"></div>
<div style="left:-387.00px;width:800px;text-align:center;top:622.17px;font-size:12.5px;line-height:20px;color:#262626;font-weight:normal;white-space:pre;">4</div>
<div style="left:0px;top:680px;width:25px;height:1px;background:#b6b6b6"></div>
<div style="left:-387.00px;width:800px;text-align:center;top:662.17px;font-size:12.5px;line-height:20px;color:#262626;font-weight:normal;white-space:pre;">5</div>
<div style="left:0px;top:720px;width:25px;height:1px;background:#b6b6b6"></div>
<div style="left:-387.00px;width:800px;text-align:center;top:702.17px;font-size:12.5px;line-height:20px;color:#262626;font-weight:normal;white-space:pre;">6</div>
<div style="left:0px;top:760px;width:25px;height:1px;background:#b6b6b6"></div>
<div style="left:-387.00px;width:800px;text-align:center;top:742.17px;font-size:12.5px;line-height:20px;color:#262626;font-weight:normal;white-space:pre;">7</div>
<div style="left:0px;top:800px;width:25px;height:1px;background:#b6b6b6"></div>
<div style="left:-387.00px;width:800px;text-align:center;top:782.17px;font-size:12.5px;line-height:20px;color:#262626;font-weight:normal;white-space:pre;">8</div>
<div style="left:0px;top:840px;width:25px;height:1px;background:#b6b6b6"></div>
<div style="left:-387.00px;width:800px;text-align:center;top:822.17px;font-size:12.5px;line-height:20px;color:#262626;font-weight:normal;white-space:pre;">9</div>
<div style="left:0px;top:880px;width:25px;height:1px;background:#b6b6b6"></div>
<div style="left:-387.00px;width:800px;text-align:center;top:862.17px;font-size:12.5px;line-height:20px;color:#262626;font-weight:normal;white-space:pre;">10</div>
<div style="left:0px;top:920px;width:25px;height:1px;background:#b6b6b6"></div>
<div style="left:-387.00px;width:800px;text-align:center;top:902.17px;font-size:12.5px;line-height:20px;color:#262626;font-weight:normal;white-space:pre;">11</div>
<div style="left:0px;top:960px;width:25px;height:1px;background:#b6b6b6"></div>
<div style="left:-387.00px;width:800px;text-align:center;top:942.17px;font-size:12.5px;line-height:20px;color:#262626;font-weight:normal;white-space:pre;">12</div>
<div style="left:-387.00px;width:800px;text-align:center;top:982.17px;font-size:12.5px;line-height:20px;color:#262626;font-weight:normal;white-space:pre;">13</div>
<div style="left:26px;top:253px;width:1873px;height:737px;background:#fff"></div>
<div style="left:1898px;top:253px;width:1px;height:737px;background:#a6a6a6"></div>
<div style="left:1899px;top:233px;width:21px;height:758px;background:#e6e6e6"></div>
<div style="left:1902px;top:235px;width:15px;height:16px;background:#fff;border:1px solid #ababab;box-sizing:border-box"></div>
<svg style="left:1905px;top:240px;" width="9" height="5" viewBox="0 0 9 5"><path d="M0 4.5h9L4.5 0z" fill="#666"/></svg>
<div style="left:1902px;top:251px;width:15px;height:616px;background:#fff;border:1px solid #ababab;box-sizing:border-box"></div>
<div style="left:1902px;top:867px;width:15px;height:109px;background:#dadada"></div>
<div style="left:1902px;top:976px;width:15px;height:14px;background:#fff;border:1px solid #d0d0d0;box-sizing:border-box"></div>
<svg style="left:1905px;top:981px;" width="9" height="5" viewBox="0 0 9 5"><path d="M0 0h9L4.5 4.5z" fill="#666"/></svg>
<div style="left:0px;top:990px;width:1920px;height:1px;background:#ababab"></div>
<div style="left:0px;top:991px;width:1920px;height:27px;background:#e6e6e6"></div>
<div style="left:0px;top:1018px;width:1920px;height:1px;background:#d0d0d0"></div>
<div style="left:0px;top:1019px;width:1920px;height:21px;background:#f0f0f0"></div>
<div style="left:0px;top:1040px;width:1920px;height:8px;background:#060806"></div>
<svg style="left:1818px;top:1044px;" width="60" height="6" viewBox="0 0 60 6"><text x="0" y="12" font-family="Liberation Sans" font-size="13" fill="#fff">23:40</text></svg>
<div style="left:1915px;top:1040px;width:1px;height:8px;background:#999"></div>
<svg style="left:27px;top:999px;" width="6" height="9" viewBox="0 0 6 9"><path d="M5 0V9L0 4.5z" fill="#c6c6c6"/></svg>
<svg style="left:55px;top:999px;" width="6" height="9" viewBox="0 0 6 9"><path d="M0 0V9L5 4.5z" fill="#c6c6c6"/></svg>
<div style="left:100px;top:994px;width:1px;height:21px;background:#a0a0a0"></div>
<div style="left:103px;top:993px;width:62px;height:22px;background:#000"></div>
<div style="left:-266.00px;width:800px;text-align:center;top:993.99px;font-size:13px;line-height:20px;color:#fff;font-weight:normal;white-space:pre;">porady</div>
<div style="left:168px;top:990px;width:117px;height:24px;background:#fff"></div>
<div style="left:167px;top:990px;width:1px;height:24px;background:#a8a8a8"></div>
<div style="left:285px;top:990px;width:1px;height:24px;background:#a8a8a8"></div>
<div style="left:170px;top:994px;width:113px;height:18px;background:linear-gradient(#fff 0%,#f4f6f8 35%,#b9c3cb 100%)"></div>
<div style="left:167px;top:1013px;width:119px;height:2px;background:#217346"></div>
<div style="left:-174.00px;width:800px;text-align:center;top:993.99px;font-size:13px;line-height:20px;color:#217346;font-weight:bold;white-space:pre;">podsumowanie</div>
<div style="left:288px;top:993px;width:37px;height:22px;background:#6092a8"></div>
<div style="left:-93.50px;width:800px;text-align:center;top:993.99px;font-size:13px;line-height:20px;color:#1a1a1a;font-weight:normal;white-space:pre;">sty</div>
<div style="left:327px;top:994px;width:1px;height:21px;background:#a0a0a0"></div>
<div style="left:330px;top:993px;width:36px;height:22px;background:#94b6c6"></div>
<div style="left:-52.00px;width:800px;text-align:center;top:993.99px;font-size:13px;line-height:20px;color:#1a1a1a;font-weight:normal;white-space:pre;">lut</div>
<div style="left:368px;top:994px;width:1px;height:21px;background:#a0a0a0"></div>
<div style="left:371px;top:993px;width:43px;height:22px;background:#bfd3dc"></div>
<div style="left:-7.50px;width:800px;text-align:center;top:993.99px;font-size:13px;line-height:20px;color:#1a1a1a;font-weight:normal;white-space:pre;">mar</div>
<div style="left:416px;top:994px;width:1px;height:21px;background:#a0a0a0"></div>
<div style="left:419px;top:993px;width:40px;height:22px;background:#d4e2e8"></div>
<div style="left:39.00px;width:800px;text-align:center;top:993.99px;font-size:13px;line-height:20px;color:#1a1a1a;font-weight:normal;white-space:pre;">kwi</div>
<div style="left:461px;top:994px;width:1px;height:21px;background:#a0a0a0"></div>
<div style="left:464px;top:993px;width:42px;height:22px;background:#e9eff2"></div>
<div style="left:85.00px;width:800px;text-align:center;top:993.99px;font-size:13px;line-height:20px;color:#1a1a1a;font-weight:normal;white-space:pre;">maj</div>
<div style="left:508px;top:994px;width:1px;height:21px;background:#a0a0a0"></div>
<div style="left:511px;top:993px;width:38px;height:22px;background:#a26f00"></div>
<div style="left:130.00px;width:800px;text-align:center;top:993.99px;font-size:13px;line-height:20px;color:#fff;font-weight:normal;white-space:pre;">cze</div>
<div style="left:551px;top:994px;width:1px;height:21px;background:#a0a0a0"></div>
<div style="left:554px;top:993px;width:35px;height:22px;background:#f8ae00"></div>
<div style="left:171.50px;width:800px;text-align:center;top:993.99px;font-size:13px;line-height:20px;color:#1a1a1a;font-weight:normal;white-space:pre;">lip</div>
<div style="left:591px;top:994px;width:1px;height:21px;background:#a0a0a0"></div>
<div style="left:594px;top:993px;width:36px;height:22px;background:#fcc651"></div>
<div style="left:212.00px;width:800px;text-align:center;top:993.99px;font-size:13px;line-height:20px;color:#1a1a1a;font-weight:normal;white-space:pre;">sie</div>
<div style="left:632px;top:994px;width:1px;height:21px;background:#a0a0a0"></div>
<div style="left:635px;top:993px;width:40px;height:22px;background:#fde09c"></div>
<div style="left:255.00px;width:800px;text-align:center;top:993.99px;font-size:13px;line-height:20px;color:#1a1a1a;font-weight:normal;white-space:pre;">wrz</div>
<div style="left:677px;top:994px;width:1px;height:21px;background:#a0a0a0"></div>
<div style="left:680px;top:993px;width:40px;height:22px;background:#fde6b4"></div>
<div style="left:300.00px;width:800px;text-align:center;top:993.99px;font-size:13px;line-height:20px;color:#1a1a1a;font-weight:normal;white-space:pre;">paź</div>
<div style="left:722px;top:994px;width:1px;height:21px;background:#a0a0a0"></div>
<div style="left:725px;top:993px;width:33px;height:22px;background:#fef2dc"></div>
<div style="left:341.50px;width:800px;text-align:center;top:993.99px;font-size:13px;line-height:20px;color:#1a1a1a;font-weight:normal;white-space:pre;">lis</div>
<div style="left:760px;top:994px;width:1px;height:21px;background:#a0a0a0"></div>
<div style="left:763px;top:993px;width:39px;height:22px;background:#93ad8c"></div>
<div style="left:382.50px;width:800px;text-align:center;top:993.99px;font-size:13px;line-height:20px;color:#1a1a1a;font-weight:normal;white-space:pre;">gru</div>
<div style="left:804px;top:994px;width:1px;height:21px;background:#a0a0a0"></div>
<div style="left:286px;top:991px;width:1px;height:24px;background:#a0a0a0"></div>
<svg style="left:836px;top:994px;" width="20" height="20" viewBox="0 0 20 20"><circle cx="10" cy="10" r="8" fill="none" stroke="#777" stroke-width="1.3"/><path d="M10 5.5v9M5.5 10h9" stroke="#777" stroke-width="1.8"/></svg>
<div style="left:1501px;top:999px;width:2px;height:2px;background:#a0a0a0"></div>
<div style="left:1501px;top:1004px;width:2px;height:2px;background:#a0a0a0"></div>
<div style="left:1501px;top:1009px;width:2px;height:2px;background:#a0a0a0"></div>
<div style="left:1518px;top:997px;width:16px;height:15px;background:#fff;border:1px solid #ababab;box-sizing:border-box"></div>
<svg style="left:1523px;top:1001px;" width="5" height="8" viewBox="0 0 5 8"><path d="M4.5 0V8L0 4z" fill="#666"/></svg>
<div style="left:1533px;top:997px;width:335px;height:15px;background:#fff;border:1px solid #ababab;box-sizing:border-box"></div>
<div style="left:1868px;top:997px;width:17px;height:15px;background:#dadada"></div>
<div style="left:1886px;top:997px;width:15px;height:15px;background:#fff;border:1px solid #ababab;box-sizing:border-box"></div>
<svg style="left:1891px;top:1001px;" width="5" height="8" viewBox="0 0 5 8"><path d="M0 0V8L4.5 4z" fill="#666"/></svg>
<div style="left:7.5px;top:1019.84px;font-size:12px;line-height:19px;color:#333;font-weight:normal;white-space:pre;">Gotowy</div>
<div style="left:1634px;top:1019px;width:38px;height:21px;background:#c8c8c8"></div>
<svg style="left:1645px;top:1022px;" width="14" height="14" viewBox="0 0 14 14"><path d="M0 0h14v14H0z" fill="#777"/><path d="M1 1h3.3v3.3H1zM5.35 1h3.3v3.3h-3.3zM9.7 1H13v3.3H9.7zM1 5.35h3.3v3.3H1zM5.35 5.35h3.3v3.3h-3.3zM9.7 5.35H13v3.3H9.7zM1 9.7h3.3V13H1zM5.35 9.7h3.3V13h-3.3zM9.7 9.7H13V13H9.7z" fill="#c8c8c8"/></svg>
<svg style="left:1684px;top:1022px;" width="14" height="14" viewBox="0 0 14 14"><rect x="0.5" y="0.5" width="13" height="13" fill="none" stroke="#666"/><rect x="3.5" y="2.5" width="7" height="9" fill="none" stroke="#666"/><path d="M5 4.8h4M5 7h4M5 9.2h4" stroke="#666" stroke-width="0.8"/></svg>
<svg style="left:1722px;top:1022px;" width="14" height="14" viewBox="0 0 14 14"><rect x="0.5" y="0.5" width="13" height="13" fill="none" stroke="#666"/><path d="M0.5 8.5H8.5V0.5M4.5 0.5V8.5" fill="none" stroke="#666"/></svg>
<div style="left:1752px;top:1029px;width:7px;height:2px;background:#666"></div>
<div style="left:1763px;top:1029px;width:100px;height:1px;background:#a0a0a0"></div>
<div style="left:1812px;top:1023px;width:5px;height:11px;background:#777"></div>
<svg style="left:1866px;top:1025px;" width="9" height="9" viewBox="0 0 9 9"><path d="M4.5 0v9M0 4.5h9" stroke="#666" stroke-width="1.8"/></svg>
<div style="left:1886px;top:1019.84px;font-size:12px;line-height:19px;color:#333;font-weight:normal;white-space:pre;letter-spacing:-1.297px;">100%</div>
<div style="left:31.3px;top:256.25px;font-size:31px;line-height:49px;color:#555;font-weight:normal;white-space:pre;transform:scaleX(0.878);transform-origin:0 0;letter-spacing:1px;-webkit-text-stroke:0.7px #fff;">TRENDY W WYDATKACH</div>
<div style="left:137px;top:298px;width:86px;height:23px;background:#595959"></div>
<div style="left:-219.20px;width:800px;text-align:center;top:300.99px;font-size:13px;line-height:20px;color:#fff;font-weight:normal;white-space:pre;letter-spacing:0.609px;">Sty</div>
<div style="left:225px;top:298px;width:86px;height:23px;background:#595959"></div>
<div style="left:-131.52px;width:800px;text-align:center;top:300.99px;font-size:13px;line-height:20px;color:#fff;font-weight:normal;white-space:pre;letter-spacing:-0.036px;">Lut</div>
<div style="left:313px;top:298px;width:86px;height:23px;background:#595959"></div>
<div style="left:-43.20px;width:800px;text-align:center;top:300.99px;font-size:13px;line-height:20px;color:#fff;font-weight:normal;white-space:pre;letter-spacing:0.605px;">Mar</div>
<div style="left:401px;top:298px;width:86px;height:23px;background:#595959"></div>
<div style="left:44.94px;width:800px;text-align:center;top:300.99px;font-size:13px;line-height:20px;color:#fff;font-weight:normal;white-space:pre;letter-spacing:0.876px;">Kwi</div>
<div style="left:489px;top:298px;width:86px;height:23px;background:#595959"></div>
<div style="left:133.01px;width:800px;text-align:center;top:300.99px;font-size:13px;line-height:20px;color:#fff;font-weight:normal;white-space:pre;letter-spacing:1.026px;">Maj</div>
<div style="left:577px;top:298px;width:86px;height:23px;background:#595959"></div>
<div style="left:220.15px;width:800px;text-align:center;top:300.99px;font-size:13px;line-height:20px;color:#fff;font-weight:normal;white-space:pre;letter-spacing:-0.709px;">Cze</div>
<div style="left:665px;top:298px;width:86px;height:23px;background:#595959"></div>
<div style="left:308.66px;width:800px;text-align:center;top:300.99px;font-size:13px;line-height:20px;color:#fff;font-weight:normal;white-space:pre;letter-spacing:0.326px;">Lip</div>
<div style="left:753px;top:298px;width:86px;height:23px;background:#595959"></div>
<div style="left:396.53px;width:800px;text-align:center;top:300.99px;font-size:13px;line-height:20px;color:#fff;font-weight:normal;white-space:pre;letter-spacing:0.055px;">Sie</div>
<div style="left:841px;top:298px;width:86px;height:23px;background:#595959"></div>
<div style="left:484.68px;width:800px;text-align:center;top:300.99px;font-size:13px;line-height:20px;color:#fff;font-weight:normal;white-space:pre;letter-spacing:0.368px;">Wrz</div>
<div style="left:929px;top:298px;width:86px;height:23px;background:#595959"></div>
<div style="left:571.90px;width:800px;text-align:center;top:300.99px;font-size:13px;line-height:20px;color:#fff;font-weight:normal;white-space:pre;letter-spacing:-1.201px;">Paź</div>
<div style="left:1017px;top:298px;width:86px;height:23px;background:#595959"></div>
<div style="left:660.27px;width:800px;text-align:center;top:300.99px;font-size:13px;line-height:20px;color:#fff;font-weight:normal;white-space:pre;letter-spacing:-0.459px;">Lis</div>
<div style="left:1105px;top:298px;width:86px;height:23px;background:#595959"></div>
<div style="left:748.43px;width:800px;text-align:center;top:300.99px;font-size:13px;line-height:20px;color:#fff;font-weight:normal;white-space:pre;letter-spacing:-0.136px;">Gru</div>
<div style="left:1193px;top:298px;width:86px;height:23px;background:#595959"></div>
<div style="left:836.62px;width:800px;text-align:center;top:300.99px;font-size:13px;line-height:20px;color:#fff;font-weight:normal;white-space:pre;letter-spacing:0.242px;">Porady</div>
<svg style="left:0px;top:0px;pointer-events:none" width="1920" height="1048" viewBox="0 0 1920 1048"><rect x="139.6" y="576" width="1053.84" height="1" fill="#ececec"/><rect x="139.6" y="549" width="1053.84" height="1" fill="#ececec"/><rect x="139.6" y="523" width="1053.84" height="1" fill="#ececec"/><rect x="139.6" y="496" width="1053.84" height="1" fill="#ececec"/><rect x="139.6" y="470" width="1053.84" height="1" fill="#ececec"/><rect x="139.6" y="443" width="1053.84" height="1" fill="#ececec"/><rect x="139.6" y="417" width="1053.84" height="1" fill="#ececec"/><rect x="139.6" y="390" width="1053.84" height="1" fill="#ececec"/><rect x="139.6" y="364" width="1053.84" height="1" fill="#ececec"/><rect x="139.6" y="337" width="1053.84" height="1" fill="#ececec"/><rect x="139" y="337" width="1" height="266" fill="#d9d9d9"/><rect x="227" y="337" width="1" height="266" fill="#d9d9d9"/><rect x="315" y="337" width="1" height="266" fill="#d9d9d9"/><rect x="403" y="337" width="1" height="266" fill="#d9d9d9"/><rect x="490" y="337" width="1" height="266" fill="#d9d9d9"/><rect x="578" y="337" width="1" height="266" fill="#d9d9d9"/><rect x="666" y="337" width="1" height="266" fill="#d9d9d9"/><rect x="754" y="337" width="1" height="266" fill="#d9d9d9"/><rect x="842" y="337" width="1" height="266" fill="#d9d9d9"/><rect x="929" y="337" width="1" height="266" fill="#d9d9d9"/><rect x="1017" y="337" width="1" height="266" fill="#d9d9d9"/><rect x="1105" y="337" width="1" height="266" fill="#d9d9d9"/><rect x="1193" y="337" width="1" height="266" fill="#d9d9d9"/><rect x="150.20" y="585.01" width="13.5" height="17.99" fill="#595959"/><rect x="163.70" y="476.36" width="13.5" height="126.64" fill="#5f93aa"/><rect x="177.20" y="544.20" width="13.5" height="58.80" fill="#f8ae00"/><rect x="190.70" y="376.72" width="13.5" height="226.28" fill="#6b8e63"/><rect x="204.20" y="573.88" width="13.5" height="29.12" fill="#c5390e"/><rect x="238.02" y="403.75" width="13.5" height="199.25" fill="#595959"/><rect x="251.52" y="476.36" width="13.5" height="126.64" fill="#5f93aa"/><rect x="265.02" y="544.20" width="13.5" height="58.80" fill="#f8ae00"/><rect x="278.52" y="557.98" width="13.5" height="45.02" fill="#6b8e63"/><rect x="292.02" y="573.88" width="13.5" height="29.12" fill="#c5390e"/><rect x="325.84" y="585.01" width="13.5" height="17.99" fill="#595959"/><rect x="339.34" y="476.36" width="13.5" height="126.64" fill="#5f93aa"/><rect x="352.84" y="544.20" width="13.5" height="58.80" fill="#f8ae00"/><rect x="366.34" y="557.98" width="13.5" height="45.02" fill="#6b8e63"/><rect x="379.84" y="544.73" width="13.5" height="58.27" fill="#c5390e"/><rect x="413.66" y="578.65" width="13.5" height="24.35" fill="#595959"/><rect x="427.16" y="537.31" width="13.5" height="65.69" fill="#5f93aa"/><rect x="440.66" y="536.25" width="13.5" height="66.75" fill="#f8ae00"/><rect x="454.16" y="376.72" width="13.5" height="226.28" fill="#6b8e63"/><rect x="467.66" y="550.56" width="13.5" height="52.44" fill="#c5390e"/><rect x="501.48" y="403.75" width="13.5" height="199.25" fill="#595959"/><rect x="514.98" y="543.67" width="13.5" height="59.33" fill="#5f93aa"/><rect x="528.48" y="426.01" width="13.5" height="176.99" fill="#f8ae00"/><rect x="541.98" y="536.25" width="13.5" height="66.75" fill="#6b8e63"/><rect x="555.48" y="585.01" width="13.5" height="17.99" fill="#c5390e"/><rect x="589.30" y="495.97" width="13.5" height="107.03" fill="#595959"/><rect x="602.80" y="550.56" width="13.5" height="52.44" fill="#5f93aa"/><rect x="616.30" y="537.84" width="13.5" height="65.16" fill="#f8ae00"/><rect x="629.80" y="503.39" width="13.5" height="99.61" fill="#6b8e63"/><rect x="643.30" y="368.77" width="13.5" height="234.23" fill="#c5390e"/><rect x="1116.22" y="495.97" width="13.5" height="107.03" fill="#595959"/><rect x="1129.72" y="369.30" width="13.5" height="233.70" fill="#5f93aa"/><rect x="1143.22" y="537.84" width="13.5" height="65.16" fill="#f8ae00"/><rect x="1156.72" y="503.39" width="13.5" height="99.61" fill="#6b8e63"/><rect x="1170.22" y="550.03" width="13.5" height="52.97" fill="#c5390e"/></svg>
<div style="left:-673.50px;width:800px;text-align:right;top:566.32px;font-size:13.5px;line-height:21px;color:#595959;font-weight:normal;white-space:pre;">50</div>
<div style="left:-673.50px;width:800px;text-align:right;top:539.32px;font-size:13.5px;line-height:21px;color:#595959;font-weight:normal;white-space:pre;">100</div>
<div style="left:-673.50px;width:800px;text-align:right;top:513.32px;font-size:13.5px;line-height:21px;color:#595959;font-weight:normal;white-space:pre;">150</div>
<div style="left:-673.50px;width:800px;text-align:right;top:486.32px;font-size:13.5px;line-height:21px;color:#595959;font-weight:normal;white-space:pre;">200</div>
<div style="left:-673.50px;width:800px;text-align:right;top:460.32px;font-size:13.5px;line-height:21px;color:#595959;font-weight:normal;white-space:pre;">250</div>
<div style="left:-673.50px;width:800px;text-align:right;top:433.32px;font-size:13.5px;line-height:21px;color:#595959;font-weight:normal;white-space:pre;">300</div>
<div style="left:-673.50px;width:800px;text-align:right;top:407.32px;font-size:13.5px;line-height:21px;color:#595959;font-weight:normal;white-space:pre;">350</div>
<div style="left:-673.50px;width:800px;text-align:right;top:380.32px;font-size:13.5px;line-height:21px;color:#595959;font-weight:normal;white-space:pre;">400</div>
<div style="left:-673.50px;width:800px;text-align:right;top:354.32px;font-size:13.5px;line-height:21px;color:#595959;font-weight:normal;white-space:pre;">450</div>
<div style="left:-673.50px;width:800px;text-align:right;top:327.32px;font-size:13.5px;line-height:21px;color:#595959;font-weight:normal;white-space:pre;">500</div>
<div style="left:1218px;top:352px;width:8px;height:8px;background:#595959"></div>
<div style="left:1230px;top:344.13px;font-size:15.5px;line-height:24px;color:#000;font-weight:normal;white-space:pre;-webkit-text-stroke:0.35px #fff;letter-spacing:-0.136px;">Wydatek 1</div>
<div style="left:1218px;top:375px;width:8px;height:8px;background:#5f93aa"></div>
<div style="left:1230px;top:367.33px;font-size:15.5px;line-height:24px;color:#000;font-weight:normal;white-space:pre;-webkit-text-stroke:0.35px #fff;letter-spacing:0.114px;">Wydatek 2</div>
<div style="left:1218px;top:398px;width:8px;height:8px;background:#f8ae00"></div>
<div style="left:1230px;top:390.53px;font-size:15.5px;line-height:24px;color:#000;font-weight:normal;white-space:pre;-webkit-text-stroke:0.35px #fff;letter-spacing:0.114px;">Wydatek 3</div>
<div style="left:1218px;top:421px;width:8px;height:8px;background:#6b8e63"></div>
<div style="left:1230px;top:413.73px;font-size:15.5px;line-height:24px;color:#000;font-weight:normal;white-space:pre;-webkit-text-stroke:0.35px #fff;letter-spacing:0.114px;">Wydatek 4</div>
<div style="left:1218px;top:444px;width:8px;height:8px;background:#c5390e"></div>
<div style="left:1230px;top:436.93px;font-size:15.5px;line-height:24px;color:#000;font-weight:normal;white-space:pre;-webkit-text-stroke:0.35px #fff;letter-spacing:0.114px;">Wydatek 5</div>
<div style="left:26px;top:618px;width:1344px;height:1px;background:#7a7a7a"></div>
<div style="left:37px;top:619.30px;font-size:15px;line-height:24px;color:#000;font-weight:bold;white-space:pre;">Wydatki</div>
<svg style="left:119px;top:622px;" width="17" height="17" viewBox="0 0 17 17"><defs><linearGradient id="fb" x1="0" y1="0" x2="0" y2="1"><stop offset="0" stop-color="#fff"/><stop offset="1" stop-color="#eef0f3"/></linearGradient></defs><rect x="0.5" y="0.5" width="16" height="16" fill="url(#fb)" stroke="#a9acb0"/><path d="M5 7h7L8.5 10.5z" fill="#595959"/></svg>
<div style="left:148px;top:619.30px;font-size:15px;line-height:24px;color:#000;font-weight:bold;white-space:pre;">Sty</div>
<svg style="left:207px;top:622px;" width="17" height="17" viewBox="0 0 17 17"><defs><linearGradient id="fb" x1="0" y1="0" x2="0" y2="1"><stop offset="0" stop-color="#fff"/><stop offset="1" stop-color="#eef0f3"/></linearGradient></defs><rect x="0.5" y="0.5" width="16" height="16" fill="url(#fb)" stroke="#a9acb0"/><path d="M5 7h7L8.5 10.5z" fill="#595959"/></svg>
<div style="left:236px;top:619.30px;font-size:15px;line-height:24px;color:#000;font-weight:bold;white-space:pre;">Lut</div>
<svg style="left:295px;top:622px;" width="17" height="17" viewBox="0 0 17 17"><defs><linearGradient id="fb" x1="0" y1="0" x2="0" y2="1"><stop offset="0" stop-color="#fff"/><stop offset="1" stop-color="#eef0f3"/></linearGradient></defs><rect x="0.5" y="0.5" width="16" height="16" fill="url(#fb)" stroke="#a9acb0"/><path d="M5 7h7L8.5 10.5z" fill="#595959"/></svg>
<div style="left:324px;top:619.30px;font-size:15px;line-height:24px;color:#000;font-weight:bold;white-space:pre;">Mar</div>
<svg style="left:383px;top:622px;" width="17" height="17" viewBox="0 0 17 17"><defs><linearGradient id="fb" x1="0" y1="0" x2="0" y2="1"><stop offset="0" stop-color="#fff"/><stop offset="1" stop-color="#eef0f3"/></linearGradient></defs><rect x="0.5" y="0.5" width="16" height="16" fill="url(#fb)" stroke="#a9acb0"/><path d="M5 7h7L8.5 10.5z" fill="#595959"/></svg>
<div style="left:412px;top:619.30px;font-size:15px;line-height:24px;color:#000;font-weight:bold;white-space:pre;">Kwi</div>
<svg style="left:471px;top:622px;" width="17" height="17" viewBox="0 0 17 17"><defs><linearGradient id="fb" x1="0" y1="0" x2="0" y2="1"><stop offset="0" stop-color="#fff"/><stop offset="1" stop-color="#eef0f3"/></linearGradient></defs><rect x="0.5" y="0.5" width="16" height="16" fill="url(#fb)" stroke="#a9acb0"/><path d="M5 7h7L8.5 10.5z" fill="#595959"/></svg>
<div style="left:500px;top:619.30px;font-size:15px;line-height:24px;color:#000;font-weight:bold;white-space:pre;">Maj</div>
<svg style="left:559px;top:622px;" width="17" height="17" viewBox="0 0 17 17"><defs><linearGradient id="fb" x1="0" y1="0" x2="0" y2="1"><stop offset="0" stop-color="#fff"/><stop offset="1" stop-color="#eef0f3"/></linearGradient></defs><rect x="0.5" y="0.5" width="16" height="16" fill="url(#fb)" stroke="#a9acb0"/><path d="M5 7h7L8.5 10.5z" fill="#595959"/></svg>
<div style="left:588px;top:619.30px;font-size:15px;line-height:24px;color:#000;font-weight:bold;white-space:pre;">Cze</div>
<svg style="left:647px;top:622px;" width="17" height="17" viewBox="0 0 17 17"><defs><linearGradient id="fb" x1="0" y1="0" x2="0" y2="1"><stop offset="0" stop-color="#fff"/><stop offset="1" stop-color="#eef0f3"/></linearGradient></defs><rect x="0.5" y="0.5" width="16" height="16" fill="url(#fb)" stroke="#a9acb0"/><path d="M5 7h7L8.5 10.5z" fill="#595959"/></svg>
<div style="left:676px;top:619.30px;font-size:15px;line-height:24px;color:#000;font-weight:bold;white-space:pre;">Lip</div>
<svg style="left:735px;top:622px;" width="17" height="17" viewBox="0 0 17 17"><defs><linearGradient id="fb" x1="0" y1="0" x2="0" y2="1"><stop offset="0" stop-color="#fff"/><stop offset="1" stop-color="#eef0f3"/></linearGradient></defs><rect x="0.5" y="0.5" width="16" height="16" fill="url(#fb)" stroke="#a9acb0"/><path d="M5 7h7L8.5 10.5z" fill="#595959"/></svg>
<div style="left:764px;top:619.30px;font-size:15px;line-height:24px;color:#000;font-weight:bold;white-space:pre;">Sie</div>
<svg style="left:823px;top:622px;" width="17" height="17" viewBox="0 0 17 17"><defs><linearGradient id="fb" x1="0" y1="0" x2="0" y2="1"><stop offset="0" stop-color="#fff"/><stop offset="1" stop-color="#eef0f3"/></linearGradient></defs><rect x="0.5" y="0.5" width="16" height="16" fill="url(#fb)" stroke="#a9acb0"/><path d="M5 7h7L8.5 10.5z" fill="#595959"/></svg>
<div style="left:852px;top:619.30px;font-size:15px;line-height:24px;color:#000;font-weight:bold;white-space:pre;">Wrz</div>
<svg style="left:911px;top:622px;" width="17" height="17" viewBox="0 0 17 17"><defs><linearGradient id="fb" x1="0" y1="0" x2="0" y2="1"><stop offset="0" stop-color="#fff"/><stop offset="1" stop-color="#eef0f3"/></linearGradient></defs><rect x="0.5" y="0.5" width="16" height="16" fill="url(#fb)" stroke="#a9acb0"/><path d="M5 7h7L8.5 10.5z" fill="#595959"/></svg>
<div style="left:940px;top:619.30px;font-size:15px;line-height:24px;color:#000;font-weight:bold;white-space:pre;">Paź</div>
<svg style="left:999px;top:622px;" width="17" height="17" viewBox="0 0 17 17"><defs><linearGradient id="fb" x1="0" y1="0" x2="0" y2="1"><stop offset="0" stop-color="#fff"/><stop offset="1" stop-color="#eef0f3"/></linearGradient></defs><rect x="0.5" y="0.5" width="16" height="16" fill="url(#fb)" stroke="#a9acb0"/><path d="M5 7h7L8.5 10.5z" fill="#595959"/></svg>
<div style="left:1028px;top:619.30px;font-size:15px;line-height:24px;color:#000;font-weight:bold;white-space:pre;">Lis</div>
<svg style="left:1087px;top:622px;" width="17" height="17" viewBox="0 0 17 17"><defs><linearGradient id="fb" x1="0" y1="0" x2="0" y2="1"><stop offset="0" stop-color="#fff"/><stop offset="1" stop-color="#eef0f3"/></linearGradient></defs><rect x="0.5" y="0.5" width="16" height="16" fill="url(#fb)" stroke="#a9acb0"/><path d="M5 7h7L8.5 10.5z" fill="#595959"/></svg>
<div style="left:1116px;top:619.30px;font-size:15px;line-height:24px;color:#000;font-weight:bold;white-space:pre;">Gru</div>
<svg style="left:1175px;top:622px;" width="17" height="17" viewBox="0 0 17 17"><defs><linearGradient id="fb" x1="0" y1="0" x2="0" y2="1"><stop offset="0" stop-color="#fff"/><stop offset="1" stop-color="#eef0f3"/></linearGradient></defs><rect x="0.5" y="0.5" width="16" height="16" fill="url(#fb)" stroke="#a9acb0"/><path d="M5 7h7L8.5 10.5z" fill="#595959"/></svg>
<div style="left:1204px;top:619.30px;font-size:15px;line-height:24px;color:#000;font-weight:bold;white-space:pre;">Suma</div>
<svg style="left:1263px;top:622px;" width="17" height="17" viewBox="0 0 17 17"><defs><linearGradient id="fb" x1="0" y1="0" x2="0" y2="1"><stop offset="0" stop-color="#fff"/><stop offset="1" stop-color="#eef0f3"/></linearGradient></defs><rect x="0.5" y="0.5" width="16" height="16" fill="url(#fb)" stroke="#a9acb0"/><path d="M5 7h7L8.5 10.5z" fill="#595959"/></svg>
<div style="left:1292px;top:619.30px;font-size:15px;line-height:24px;color:#000;font-weight:bold;white-space:pre;">Trend</div>
<svg style="left:1352px;top:622px;" width="17" height="17" viewBox="0 0 17 17"><defs><linearGradient id="fb" x1="0" y1="0" x2="0" y2="1"><stop offset="0" stop-color="#fff"/><stop offset="1" stop-color="#eef0f3"/></linearGradient></defs><rect x="0.5" y="0.5" width="16" height="16" fill="url(#fb)" stroke="#a9acb0"/><path d="M5 7h7L8.5 10.5z" fill="#595959"/></svg>
<div style="left:26px;top:640px;width:1344px;height:1px;background:#d9d9d9"></div>
<div style="left:26px;top:641px;width:110px;height:39px;background:#f2f2f2"></div>
<div style="left:225px;top:641px;width:87px;height:39px;background:#f2f2f2"></div>
<div style="left:401px;top:641px;width:87px;height:39px;background:#f2f2f2"></div>
<div style="left:577px;top:641px;width:87px;height:39px;background:#f2f2f2"></div>
<div style="left:753px;top:641px;width:87px;height:39px;background:#f2f2f2"></div>
<div style="left:929px;top:641px;width:87px;height:39px;background:#f2f2f2"></div>
<div style="left:1105px;top:641px;width:87px;height:39px;background:#f2f2f2"></div>
<div style="left:26px;top:680px;width:1344px;height:1px;background:#dcdcdc"></div>
<div style="left:37px;top:661.99px;font-size:13px;line-height:20px;color:#000;font-weight:normal;white-space:pre;">Wydatek 1</div>
<div style="left:-587.00px;width:800px;text-align:right;top:661.99px;font-size:13px;line-height:20px;color:#000;font-weight:normal;white-space:pre;">33,00</div>
<div style="left:-499.00px;width:800px;text-align:right;top:661.99px;font-size:13px;line-height:20px;color:#000;font-weight:normal;white-space:pre;">375,00</div>
<div style="left:-411.00px;width:800px;text-align:right;top:661.99px;font-size:13px;line-height:20px;color:#000;font-weight:normal;white-space:pre;">33,00</div>
<div style="left:-323.00px;width:800px;text-align:right;top:661.99px;font-size:13px;line-height:20px;color:#000;font-weight:normal;white-space:pre;">45,00</div>
<div style="left:-235.00px;width:800px;text-align:right;top:661.99px;font-size:13px;line-height:20px;color:#000;font-weight:normal;white-space:pre;">375,00</div>
<div style="left:-147.00px;width:800px;text-align:right;top:661.99px;font-size:13px;line-height:20px;color:#000;font-weight:normal;white-space:pre;">201,00</div>
<div style="left:-59.00px;width:800px;text-align:right;top:661.99px;font-size:13px;line-height:20px;color:#000;font-weight:normal;white-space:pre;">0,00</div>
<div style="left:29.00px;width:800px;text-align:right;top:661.99px;font-size:13px;line-height:20px;color:#000;font-weight:normal;white-space:pre;">0,00</div>
<div style="left:117.00px;width:800px;text-align:right;top:661.99px;font-size:13px;line-height:20px;color:#000;font-weight:normal;white-space:pre;">0,00</div>
<div style="left:205.00px;width:800px;text-align:right;top:661.99px;font-size:13px;line-height:20px;color:#000;font-weight:normal;white-space:pre;">0,00</div>
<div style="left:293.00px;width:800px;text-align:right;top:661.99px;font-size:13px;line-height:20px;color:#000;font-weight:normal;white-space:pre;">0,00</div>
<div style="left:381.00px;width:800px;text-align:right;top:661.99px;font-size:13px;line-height:20px;color:#000;font-weight:normal;white-space:pre;">201,00</div>
<div style="left:469.00px;width:800px;text-align:right;top:661.99px;font-size:13px;line-height:20px;color:#000;font-weight:normal;white-space:pre;">1 263,00</div>
<div style="left:26px;top:681px;width:110px;height:39px;background:#f2f2f2"></div>
<div style="left:225px;top:681px;width:87px;height:39px;background:#f2f2f2"></div>
<div style="left:401px;top:681px;width:87px;height:39px;background:#f2f2f2"></div>
<div style="left:577px;top:681px;width:87px;height:39px;background:#f2f2f2"></div>
<div style="left:753px;top:681px;width:87px;height:39px;background:#f2f2f2"></div>
<div style="left:929px;top:681px;width:87px;height:39px;background:#f2f2f2"></div>
<div style="left:1105px;top:681px;width:87px;height:39px;background:#f2f2f2"></div>
<div style="left:26px;top:720px;width:1344px;height:1px;background:#dcdcdc"></div>
<div style="left:37px;top:701.99px;font-size:13px;line-height:20px;color:#000;font-weight:normal;white-space:pre;">Wydatek 2</div>
<div style="left:-587.00px;width:800px;text-align:right;top:701.99px;font-size:13px;line-height:20px;color:#000;font-weight:normal;white-space:pre;">238,00</div>
<div style="left:-499.00px;width:800px;text-align:right;top:701.99px;font-size:13px;line-height:20px;color:#000;font-weight:normal;white-space:pre;">238,00</div>
<div style="left:-411.00px;width:800px;text-align:right;top:701.99px;font-size:13px;line-height:20px;color:#000;font-weight:normal;white-space:pre;">238,00</div>
<div style="left:-323.00px;width:800px;text-align:right;top:701.99px;font-size:13px;line-height:20px;color:#000;font-weight:normal;white-space:pre;">123,00</div>
<div style="left:-235.00px;width:800px;text-align:right;top:701.99px;font-size:13px;line-height:20px;color:#000;font-weight:normal;white-space:pre;">111,00</div>
<div style="left:-147.00px;width:800px;text-align:right;top:701.99px;font-size:13px;line-height:20px;color:#000;font-weight:normal;white-space:pre;">98,00</div>
<div style="left:-59.00px;width:800px;text-align:right;top:701.99px;font-size:13px;line-height:20px;color:#000;font-weight:normal;white-space:pre;">0,00</div>
<div style="left:29.00px;width:800px;text-align:right;top:701.99px;font-size:13px;line-height:20px;color:#000;font-weight:normal;white-space:pre;">0,00</div>
<div style="left:117.00px;width:800px;text-align:right;top:701.99px;font-size:13px;line-height:20px;color:#000;font-weight:normal;white-space:pre;">0,00</div>
<div style="left:205.00px;width:800px;text-align:right;top:701.99px;font-size:13px;line-height:20px;color:#000;font-weight:normal;white-space:pre;">0,00</div>
<div style="left:293.00px;width:800px;text-align:right;top:701.99px;font-size:13px;line-height:20px;color:#000;font-weight:normal;white-space:pre;">0,00</div>
<div style="left:381.00px;width:800px;text-align:right;top:701.99px;font-size:13px;line-height:20px;color:#000;font-weight:normal;white-space:pre;">440,00</div>
<div style="left:469.00px;width:800px;text-align:right;top:701.99px;font-size:13px;line-height:20px;color:#000;font-weight:normal;white-space:pre;">1 486,00</div>
<div style="left:26px;top:721px;width:110px;height:39px;background:#f2f2f2"></div>
<div style="left:225px;top:721px;width:87px;height:39px;background:#f2f2f2"></div>
<div style="left:401px;top:721px;width:87px;height:39px;background:#f2f2f2"></div>
<div style="left:577px;top:721px;width:87px;height:39px;background:#f2f2f2"></div>
<div style="left:753px;top:721px;width:87px;height:39px;background:#f2f2f2"></div>
<div style="left:929px;top:721px;width:87px;height:39px;background:#f2f2f2"></div>
<div style="left:1105px;top:721px;width:87px;height:39px;background:#f2f2f2"></div>
<div style="left:26px;top:760px;width:1344px;height:1px;background:#dcdcdc"></div>
<div style="left:37px;top:741.99px;font-size:13px;line-height:20px;color:#000;font-weight:normal;white-space:pre;">Wydatek 3</div>
<div style="left:-587.00px;width:800px;text-align:right;top:741.99px;font-size:13px;line-height:20px;color:#000;font-weight:normal;white-space:pre;">110,00</div>
<div style="left:-499.00px;width:800px;text-align:right;top:741.99px;font-size:13px;line-height:20px;color:#000;font-weight:normal;white-space:pre;">110,00</div>
<div style="left:-411.00px;width:800px;text-align:right;top:741.99px;font-size:13px;line-height:20px;color:#000;font-weight:normal;white-space:pre;">110,00</div>
<div style="left:-323.00px;width:800px;text-align:right;top:741.99px;font-size:13px;line-height:20px;color:#000;font-weight:normal;white-space:pre;">125,00</div>
<div style="left:-235.00px;width:800px;text-align:right;top:741.99px;font-size:13px;line-height:20px;color:#000;font-weight:normal;white-space:pre;">333,00</div>
<div style="left:-147.00px;width:800px;text-align:right;top:741.99px;font-size:13px;line-height:20px;color:#000;font-weight:normal;white-space:pre;">122,00</div>
<div style="left:-59.00px;width:800px;text-align:right;top:741.99px;font-size:13px;line-height:20px;color:#000;font-weight:normal;white-space:pre;">0,00</div>
<div style="left:29.00px;width:800px;text-align:right;top:741.99px;font-size:13px;line-height:20px;color:#000;font-weight:normal;white-space:pre;">0,00</div>
<div style="left:117.00px;width:800px;text-align:right;top:741.99px;font-size:13px;line-height:20px;color:#000;font-weight:normal;white-space:pre;">0,00</div>
<div style="left:205.00px;width:800px;text-align:right;top:741.99px;font-size:13px;line-height:20px;color:#000;font-weight:normal;white-space:pre;">0,00</div>
<div style="left:293.00px;width:800px;text-align:right;top:741.99px;font-size:13px;line-height:20px;color:#000;font-weight:normal;white-space:pre;">0,00</div>
<div style="left:381.00px;width:800px;text-align:right;top:741.99px;font-size:13px;line-height:20px;color:#000;font-weight:normal;white-space:pre;">122,00</div>
<div style="left:469.00px;width:800px;text-align:right;top:741.99px;font-size:13px;line-height:20px;color:#000;font-weight:normal;white-space:pre;">1 032,00</div>
<div style="left:26px;top:761px;width:110px;height:39px;background:#f2f2f2"></div>
<div style="left:225px;top:761px;width:87px;height:39px;background:#f2f2f2"></div>
<div style="left:401px;top:761px;width:87px;height:39px;background:#f2f2f2"></div>
<div style="left:577px;top:761px;width:87px;height:39px;background:#f2f2f2"></div>
<div style="left:753px;top:761px;width:87px;height:39px;background:#f2f2f2"></div>
<div style="left:929px;top:761px;width:87px;height:39px;background:#f2f2f2"></div>
<div style="left:1105px;top:761px;width:87px;height:39px;background:#f2f2f2"></div>
<div style="left:26px;top:800px;width:1344px;height:1px;background:#dcdcdc"></div>
<div style="left:37px;top:781.99px;font-size:13px;line-height:20px;color:#000;font-weight:normal;white-space:pre;">Wydatek 4</div>
<div style="left:-587.00px;width:800px;text-align:right;top:781.99px;font-size:13px;line-height:20px;color:#000;font-weight:normal;white-space:pre;">426,00</div>
<div style="left:-499.00px;width:800px;text-align:right;top:781.99px;font-size:13px;line-height:20px;color:#000;font-weight:normal;white-space:pre;">84,00</div>
<div style="left:-411.00px;width:800px;text-align:right;top:781.99px;font-size:13px;line-height:20px;color:#000;font-weight:normal;white-space:pre;">84,00</div>
<div style="left:-323.00px;width:800px;text-align:right;top:781.99px;font-size:13px;line-height:20px;color:#000;font-weight:normal;white-space:pre;">426,00</div>
<div style="left:-235.00px;width:800px;text-align:right;top:781.99px;font-size:13px;line-height:20px;color:#000;font-weight:normal;white-space:pre;">125,00</div>
<div style="left:-147.00px;width:800px;text-align:right;top:781.99px;font-size:13px;line-height:20px;color:#000;font-weight:normal;white-space:pre;">187,00</div>
<div style="left:-59.00px;width:800px;text-align:right;top:781.99px;font-size:13px;line-height:20px;color:#000;font-weight:normal;white-space:pre;">0,00</div>
<div style="left:29.00px;width:800px;text-align:right;top:781.99px;font-size:13px;line-height:20px;color:#000;font-weight:normal;white-space:pre;">0,00</div>
<div style="left:117.00px;width:800px;text-align:right;top:781.99px;font-size:13px;line-height:20px;color:#000;font-weight:normal;white-space:pre;">0,00</div>
<div style="left:205.00px;width:800px;text-align:right;top:781.99px;font-size:13px;line-height:20px;color:#000;font-weight:normal;white-space:pre;">0,00</div>
<div style="left:293.00px;width:800px;text-align:right;top:781.99px;font-size:13px;line-height:20px;color:#000;font-weight:normal;white-space:pre;">0,00</div>
<div style="left:381.00px;width:800px;text-align:right;top:781.99px;font-size:13px;line-height:20px;color:#000;font-weight:normal;white-space:pre;">187,00</div>
<div style="left:469.00px;width:800px;text-align:right;top:781.99px;font-size:13px;line-height:20px;color:#000;font-weight:normal;white-space:pre;">1 519,00</div>
<div style="left:26px;top:801px;width:110px;height:39px;background:#f2f2f2"></div>
<div style="left:225px;top:801px;width:87px;height:39px;background:#f2f2f2"></div>
<div style="left:401px;top:801px;width:87px;height:39px;background:#f2f2f2"></div>
<div style="left:577px;top:801px;width:87px;height:39px;background:#f2f2f2"></div>
<div style="left:753px;top:801px;width:87px;height:39px;background:#f2f2f2"></div>
<div style="left:929px;top:801px;width:87px;height:39px;background:#f2f2f2"></div>
<div style="left:1105px;top:801px;width:87px;height:39px;background:#f2f2f2"></div>
<div style="left:26px;top:840px;width:1344px;height:1px;background:#dcdcdc"></div>
<div style="left:37px;top:821.99px;font-size:13px;line-height:20px;color:#000;font-weight:normal;white-space:pre;">Wydatek 5</div>
<div style="left:-587.00px;width:800px;text-align:right;top:821.99px;font-size:13px;line-height:20px;color:#000;font-weight:normal;white-space:pre;">54,00</div>
<div style="left:-499.00px;width:800px;text-align:right;top:821.99px;font-size:13px;line-height:20px;color:#000;font-weight:normal;white-space:pre;">54,00</div>
<div style="left:-411.00px;width:800px;text-align:right;top:821.99px;font-size:13px;line-height:20px;color:#000;font-weight:normal;white-space:pre;">109,00</div>
<div style="left:-323.00px;width:800px;text-align:right;top:821.99px;font-size:13px;line-height:20px;color:#000;font-weight:normal;white-space:pre;">98,00</div>
<div style="left:-235.00px;width:800px;text-align:right;top:821.99px;font-size:13px;line-height:20px;color:#000;font-weight:normal;white-space:pre;">33,00</div>
<div style="left:-147.00px;width:800px;text-align:right;top:821.99px;font-size:13px;line-height:20px;color:#000;font-weight:normal;white-space:pre;">441,00</div>
<div style="left:-59.00px;width:800px;text-align:right;top:821.99px;font-size:13px;line-height:20px;color:#000;font-weight:normal;white-space:pre;">0,00</div>
<div style="left:29.00px;width:800px;text-align:right;top:821.99px;font-size:13px;line-height:20px;color:#000;font-weight:normal;white-space:pre;">0,00</div>
<div style="left:117.00px;width:800px;text-align:right;top:821.99px;font-size:13px;line-height:20px;color:#000;font-weight:normal;white-space:pre;">0,00</div>
<div style="left:205.00px;width:800px;text-align:right;top:821.99px;font-size:13px;line-height:20px;color:#000;font-weight:normal;white-space:pre;">0,00</div>
<div style="left:293.00px;width:800px;text-align:right;top:821.99px;font-size:13px;line-height:20px;color:#000;font-weight:normal;white-space:pre;">0,00</div>
<div style="left:381.00px;width:800px;text-align:right;top:821.99px;font-size:13px;line-height:20px;color:#000;font-weight:normal;white-space:pre;">99,00</div>
<div style="left:469.00px;width:800px;text-align:right;top:821.99px;font-size:13px;line-height:20px;color:#000;font-weight:normal;white-space:pre;">888,00</div>
<div style="left:136px;top:641px;width:1px;height:239px;background:#dcdcdc"></div>
<div style="left:224px;top:641px;width:1px;height:239px;background:#dcdcdc"></div>
<div style="left:312px;top:641px;width:1px;height:239px;background:#dcdcdc"></div>
<div style="left:400px;top:641px;width:1px;height:239px;background:#dcdcdc"></div>
<div style="left:488px;top:641px;width:1px;height:239px;background:#dcdcdc"></div>
<div style="left:576px;top:641px;width:1px;height:239px;background:#dcdcdc"></div>
<div style="left:664px;top:641px;width:1px;height:239px;background:#dcdcdc"></div>
<div style="left:752px;top:641px;width:1px;height:239px;background:#dcdcdc"></div>
<div style="left:840px;top:641px;width:1px;height:239px;background:#dcdcdc"></div>
<div style="left:928px;top:641px;width:1px;height:239px;background:#dcdcdc"></div>
<div style="left:1016px;top:641px;width:1px;height:239px;background:#dcdcdc"></div>
<div style="left:1104px;top:641px;width:1px;height:239px;background:#dcdcdc"></div>
<div style="left:1192px;top:641px;width:1px;height:239px;background:#dcdcdc"></div>
<div style="left:1280px;top:641px;width:1px;height:239px;background:#dcdcdc"></div>
<div style="left:37px;top:859.30px;font-size:15px;line-height:24px;color:#000;font-weight:bold;white-space:pre;">Suma</div>
<div style="left:-587.00px;width:800px;text-align:right;top:859.97px;font-size:14.5px;line-height:23px;color:#000;font-weight:bold;white-space:pre;">861,00</div>
<div style="left:-499.00px;width:800px;text-align:right;top:859.97px;font-size:14.5px;line-height:23px;color:#000;font-weight:bold;white-space:pre;">861,00</div>
<div style="left:-411.00px;width:800px;text-align:right;top:859.97px;font-size:14.5px;line-height:23px;color:#000;font-weight:bold;white-space:pre;">574,00</div>
<div style="left:-323.00px;width:800px;text-align:right;top:859.97px;font-size:14.5px;line-height:23px;color:#000;font-weight:bold;white-space:pre;">817,00</div>
<div style="left:-235.00px;width:800px;text-align:right;top:859.97px;font-size:14.5px;line-height:23px;color:#000;font-weight:bold;white-space:pre;">977,00</div>
<div style="left:-147.00px;width:800px;text-align:right;top:859.97px;font-size:14.5px;line-height:23px;color:#000;font-weight:bold;white-space:pre;">1 049,00</div>
<div style="left:-59.00px;width:800px;text-align:right;top:859.97px;font-size:14.5px;line-height:23px;color:#000;font-weight:bold;white-space:pre;">0,00</div>
<div style="left:29.00px;width:800px;text-align:right;top:859.97px;font-size:14.5px;line-height:23px;color:#000;font-weight:bold;white-space:pre;">0,00</div>
<div style="left:117.00px;width:800px;text-align:right;top:859.97px;font-size:14.5px;line-height:23px;color:#000;font-weight:bold;white-space:pre;">0,00</div>
<div style="left:205.00px;width:800px;text-align:right;top:859.97px;font-size:14.5px;line-height:23px;color:#000;font-weight:bold;white-space:pre;">0,00</div>
<div style="left:293.00px;width:800px;text-align:right;top:859.97px;font-size:14.5px;line-height:23px;color:#000;font-weight:bold;white-space:pre;">0,00</div>
<div style="left:381.00px;width:800px;text-align:right;top:859.97px;font-size:14.5px;line-height:23px;color:#000;font-weight:bold;white-space:pre;">1 049,00</div>
<div style="left:469.00px;width:800px;text-align:right;top:859.97px;font-size:14.5px;line-height:23px;color:#000;font-weight:bold;white-space:pre;">6 188,00</div>
<div style="left:26px;top:880px;width:1344px;height:1px;background:#7a7a7a"></div>
<svg style="left:1365px;top:875px;" width="5" height="5" viewBox="0 0 5 5"><path d="M4 0V5H0z" fill="#3b5fc4"/></svg>
<svg style="left:0px;top:0px;pointer-events:none" width="1920" height="1048" viewBox="0 0 1920 1048"><polyline points="1287.0,674.2 1293.9,645.0 1300.8,674.2 1307.7,673.2 1314.6,645.0 1321.5,659.8 1328.4,677.0 1335.3,677.0 1342.2,677.0 1349.1,677.0 1356.0,677.0 1362.9,659.8" fill="none" stroke="#3e5a6b" stroke-width="1.1"/><path d="M1287.0 671.9L1289.3 674.2L1287.0 676.5L1284.7 674.2z" fill="#d6461f"/><path d="M1293.9 642.7L1296.2 645.0L1293.9 647.3L1291.6 645.0z" fill="#d6461f"/><path d="M1300.8 671.9L1303.1 674.2L1300.8 676.5L1298.5 674.2z" fill="#d6461f"/><path d="M1307.7 670.9L1310.0 673.2L1307.7 675.5L1305.4 673.2z" fill="#d6461f"/><path d="M1314.6 642.7L1316.9 645.0L1314.6 647.3L1312.3 645.0z" fill="#d6461f"/><path d="M1321.5 657.5L1323.8 659.8L1321.5 662.1L1319.2 659.8z" fill="#d6461f"/><path d="M1328.4 674.7L1330.7 677.0L1328.4 679.3L1326.1 677.0z" fill="#d6461f"/><path d="M1335.3 674.7L1337.6 677.0L1335.3 679.3L1333.0 677.0z" fill="#d6461f"/><path d="M1342.2 674.7L1344.5 677.0L1342.2 679.3L1339.9 677.0z" fill="#d6461f"/><path d="M1349.1 674.7L1351.4 677.0L1349.1 679.3L1346.8 677.0z" fill="#d6461f"/><path d="M1356.0 674.7L1358.3 677.0L1356.0 679.3L1353.7 677.0z" fill="#d6461f"/><path d="M1362.9 657.5L1365.2 659.8L1362.9 662.1L1360.6 659.8z" fill="#7d2714"/><polyline points="1287.0,699.7 1293.9,699.7 1300.8,699.7 1307.7,708.1 1314.6,708.9 1321.5,709.9 1328.4,717.0 1335.3,717.0 1342.2,717.0 1349.1,717.0 1356.0,717.0 1362.9,685.0" fill="none" stroke="#3e5a6b" stroke-width="1.1"/><path d="M1287.0 697.4L1289.3 699.7L1287.0 702.0L1284.7 699.7z" fill="#d6461f"/><path d="M1293.9 697.4L1296.2 699.7L1293.9 702.0L1291.6 699.7z" fill="#d6461f"/><path d="M1300.8 697.4L1303.1 699.7L1300.8 702.0L1298.5 699.7z" fill="#d6461f"/><path d="M1307.7 705.8L1310.0 708.1L1307.7 710.4L1305.4 708.1z" fill="#d6461f"/><path d="M1314.6 706.6L1316.9 708.9L1314.6 711.2L1312.3 708.9z" fill="#d6461f"/><path d="M1321.5 707.6L1323.8 709.9L1321.5 712.2L1319.2 709.9z" fill="#d6461f"/><path d="M1328.4 714.7L1330.7 717.0L1328.4 719.3L1326.1 717.0z" fill="#d6461f"/><path d="M1335.3 714.7L1337.6 717.0L1335.3 719.3L1333.0 717.0z" fill="#d6461f"/><path d="M1342.2 714.7L1344.5 717.0L1342.2 719.3L1339.9 717.0z" fill="#d6461f"/><path d="M1349.1 714.7L1351.4 717.0L1349.1 719.3L1346.8 717.0z" fill="#d6461f"/><path d="M1356.0 714.7L1358.3 717.0L1356.0 719.3L1353.7 717.0z" fill="#d6461f"/><path d="M1362.9 682.7L1365.2 685.0L1362.9 687.3L1360.6 685.0z" fill="#7d2714"/><polyline points="1287.0,746.4 1293.9,746.4 1300.8,746.4 1307.7,745.0 1314.6,725.0 1321.5,745.3 1328.4,757.0 1335.3,757.0 1342.2,757.0 1349.1,757.0 1356.0,757.0 1362.9,745.3" fill="none" stroke="#3e5a6b" stroke-width="1.1"/><path d="M1287.0 744.1L1289.3 746.4L1287.0 748.7L1284.7 746.4z" fill="#d6461f"/><path d="M1293.9 744.1L1296.2 746.4L1293.9 748.7L1291.6 746.4z" fill="#d6461f"/><path d="M1300.8 744.1L1303.1 746.4L1300.8 748.7L1298.5 746.4z" fill="#d6461f"/><path d="M1307.7 742.7L1310.0 745.0L1307.7 747.3L1305.4 745.0z" fill="#d6461f"/><path d="M1314.6 722.7L1316.9 725.0L1314.6 727.3L1312.3 725.0z" fill="#d6461f"/><path d="M1321.5 743.0L1323.8 745.3L1321.5 747.6L1319.2 745.3z" fill="#d6461f"/><path d="M1328.4 754.7L1330.7 757.0L1328.4 759.3L1326.1 757.0z" fill="#d6461f"/><path d="M1335.3 754.7L1337.6 757.0L1335.3 759.3L1333.0 757.0z" fill="#d6461f"/><path d="M1342.2 754.7L1344.5 757.0L1342.2 759.3L1339.9 757.0z" fill="#d6461f"/><path d="M1349.1 754.7L1351.4 757.0L1349.1 759.3L1346.8 757.0z" fill="#d6461f"/><path d="M1356.0 754.7L1358.3 757.0L1356.0 759.3L1353.7 757.0z" fill="#d6461f"/><path d="M1362.9 743.0L1365.2 745.3L1362.9 747.6L1360.6 745.3z" fill="#7d2714"/><polyline points="1287.0,765.0 1293.9,790.7 1300.8,790.7 1307.7,765.0 1314.6,787.6 1321.5,783.0 1328.4,797.0 1335.3,797.0 1342.2,797.0 1349.1,797.0 1356.0,797.0 1362.9,783.0" fill="none" stroke="#3e5a6b" stroke-width="1.1"/><path d="M1287.0 762.7L1289.3 765.0L1287.0 767.3L1284.7 765.0z" fill="#d6461f"/><path d="M1293.9 788.4L1296.2 790.7L1293.9 793.0L1291.6 790.7z" fill="#d6461f"/><path d="M1300.8 788.4L1303.1 790.7L1300.8 793.0L1298.5 790.7z" fill="#d6461f"/><path d="M1307.7 762.7L1310.0 765.0L1307.7 767.3L1305.4 765.0z" fill="#d6461f"/><path d="M1314.6 785.3L1316.9 787.6L1314.6 789.9L1312.3 787.6z" fill="#d6461f"/><path d="M1321.5 780.7L1323.8 783.0L1321.5 785.3L1319.2 783.0z" fill="#d6461f"/><path d="M1328.4 794.7L1330.7 797.0L1328.4 799.3L1326.1 797.0z" fill="#d6461f"/><path d="M1335.3 794.7L1337.6 797.0L1335.3 799.3L1333.0 797.0z" fill="#d6461f"/><path d="M1342.2 794.7L1344.5 797.0L1342.2 799.3L1339.9 797.0z" fill="#d6461f"/><path d="M1349.1 794.7L1351.4 797.0L1349.1 799.3L1346.8 797.0z" fill="#d6461f"/><path d="M1356.0 794.7L1358.3 797.0L1356.0 799.3L1353.7 797.0z" fill="#d6461f"/><path d="M1362.9 780.7L1365.2 783.0L1362.9 785.3L1360.6 783.0z" fill="#7d2714"/><polyline points="1287.0,833.1 1293.9,833.1 1300.8,829.1 1307.7,829.9 1314.6,834.6 1321.5,805.0 1328.4,837.0 1335.3,837.0 1342.2,837.0 1349.1,837.0 1356.0,837.0 1362.9,829.8" fill="none" stroke="#3e5a6b" stroke-width="1.1"/><path d="M1287.0 830.8L1289.3 833.1L1287.0 835.4L1284.7 833.1z" fill="#d6461f"/><path d="M1293.9 830.8L1296.2 833.1L1293.9 835.4L1291.6 833.1z" fill="#d6461f"/><path d="M1300.8 826.8L1303.1 829.1L1300.8 831.4L1298.5 829.1z" fill="#d6461f"/><path d="M1307.7 827.6L1310.0 829.9L1307.7 832.2L1305.4 829.9z" fill="#d6461f"/><path d="M1314.6 832.3L1316.9 834.6L1314.6 836.9L1312.3 834.6z" fill="#d6461f"/><path d="M1321.5 802.7L1323.8 805.0L1321.5 807.3L1319.2 805.0z" fill="#d6461f"/><path d="M1328.4 834.7L1330.7 837.0L1328.4 839.3L1326.1 837.0z" fill="#d6461f"/><path d="M1335.3 834.7L1337.6 837.0L1335.3 839.3L1333.0 837.0z" fill="#d6461f"/><path d="M1342.2 834.7L1344.5 837.0L1342.2 839.3L1339.9 837.0z" fill="#d6461f"/><path d="M1349.1 834.7L1351.4 837.0L1349.1 839.3L1346.8 837.0z" fill="#d6461f"/><path d="M1356.0 834.7L1358.3 837.0L1356.0 839.3L1353.7 837.0z" fill="#d6461f"/><path d="M1362.9 827.5L1365.2 829.8L1362.9 832.1L1360.6 829.8z" fill="#7d2714"/><polyline points="1287.0,850.7 1293.9,850.7 1300.8,859.5 1307.7,852.1 1314.6,847.2 1321.5,845.0 1328.4,877.0 1335.3,877.0 1342.2,877.0 1349.1,877.0 1356.0,877.0 1362.9,845.0" fill="none" stroke="#7f7f7f" stroke-width="1.1"/><path d="M1287.0 848.4L1289.3 850.7L1287.0 853.0L1284.7 850.7z" fill="#d6461f"/><path d="M1293.9 848.4L1296.2 850.7L1293.9 853.0L1291.6 850.7z" fill="#d6461f"/><path d="M1300.8 857.2L1303.1 859.5L1300.8 861.8L1298.5 859.5z" fill="#d6461f"/><path d="M1307.7 849.8L1310.0 852.1L1307.7 854.4L1305.4 852.1z" fill="#d6461f"/><path d="M1314.6 844.9L1316.9 847.2L1314.6 849.5L1312.3 847.2z" fill="#d6461f"/><path d="M1321.5 842.7L1323.8 845.0L1321.5 847.3L1319.2 845.0z" fill="#d6461f"/><path d="M1328.4 874.7L1330.7 877.0L1328.4 879.3L1326.1 877.0z" fill="#d6461f"/><path d="M1335.3 874.7L1337.6 877.0L1335.3 879.3L1333.0 877.0z" fill="#d6461f"/><path d="M1342.2 874.7L1344.5 877.0L1342.2 879.3L1339.9 877.0z" fill="#d6461f"/><path d="M1349.1 874.7L1351.4 877.0L1349.1 879.3L1346.8 877.0z" fill="#d6461f"/><path d="M1356.0 874.7L1358.3 877.0L1356.0 879.3L1353.7 877.0z" fill="#d6461f"/><path d="M1362.9 842.7L1365.2 845.0L1362.9 847.3L1360.6 845.0z" fill="#d6461f"/></svg>
<div style="left:24px;top:251px;width:114px;height:49px;border:2px solid #217346;box-sizing:border-box"></div>
<div style="left:133px;top:295px;width:6px;height:1px;background:#fff"></div>
<div style="left:133px;top:295px;width:1px;height:6px;background:#fff"></div>
<div style="left:134px;top:296px;width:5px;height:5px;background:#217346"></div>
<div style="left:81px;top:304px;width:179px;height:126px;background:#ffffe1;border:1px solid #767676;box-sizing:border-box"></div>
<div style="left:88.3px;top:306.84px;font-size:12px;line-height:19px;color:#575757;font-weight:normal;white-space:pre;letter-spacing:-0.134px;">Skoroszyt trendów w</div>
<div style="left:88.3px;top:321.84px;font-size:12px;line-height:19px;color:#575757;font-weight:normal;white-space:pre;letter-spacing:-0.099px;">wydatkach, który śledzi</div>
<div style="left:88.3px;top:336.84px;font-size:12px;line-height:19px;color:#575757;font-weight:normal;white-space:pre;letter-spacing:-0.093px;">określone wydatki na</div>
<div style="left:88.3px;top:351.84px;font-size:12px;line-height:19px;color:#575757;font-weight:normal;white-space:pre;letter-spacing:-0.177px;">przestrzeni 12 miesięcy. Ten</div>
<div style="left:88.3px;top:366.84px;font-size:12px;line-height:19px;color:#575757;font-weight:normal;white-space:pre;letter-spacing:-0.277px;">skoroszyt zawiera arkusz porad,</div>
<div style="left:88.3px;top:381.84px;font-size:12px;line-height:19px;color:#575757;font-weight:normal;white-space:pre;letter-spacing:-0.080px;">ten arkusz podsumowania i</div>
<div style="left:88.3px;top:396.84px;font-size:12px;line-height:19px;color:#575757;font-weight:normal;white-space:pre;letter-spacing:-0.249px;">arkusz dla każdego miesiąca</div>
</body></html>
